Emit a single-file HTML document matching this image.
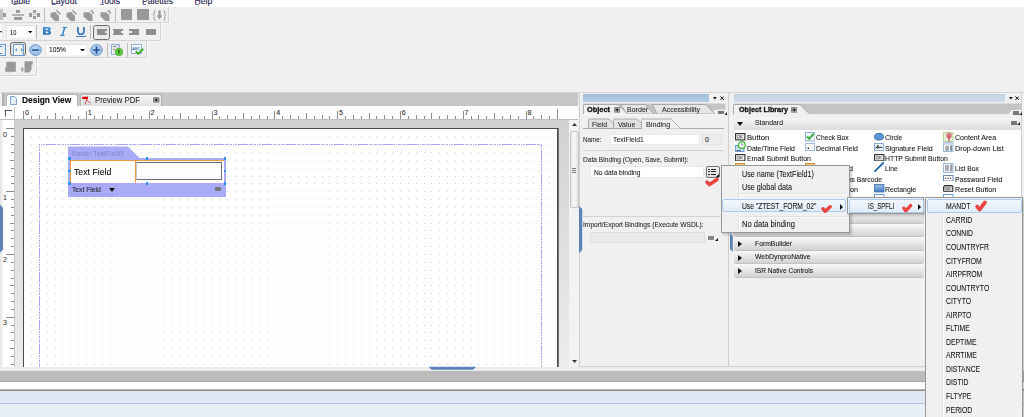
<!DOCTYPE html><html><head><meta charset='utf-8'><style>
*{margin:0;padding:0;box-sizing:border-box}
html,body{width:1024px;height:417px;overflow:hidden;background:#f0f0f0;font-family:"Liberation Sans",sans-serif;color:#222}
body{position:relative}
div,span,svg{position:absolute;display:block}
.t{white-space:nowrap;line-height:1;-webkit-text-stroke:0.06px currentColor}
.ico{background:#8e8e8e}
</style></head><body><div style="left:0.0px;top:0.0px;width:1024.0px;height:7.0px;background:#fff"></div>
<span class="t" style="left:9.5px;top:-3.0px;font-size:8.6px;color:#22224a;font-weight:normal;-webkit-text-stroke:0.1px currentColor">Table</span>
<span class="t" style="left:51.0px;top:-3.0px;font-size:8.6px;color:#22224a;font-weight:normal;-webkit-text-stroke:0.1px currentColor">Layout</span>
<span class="t" style="left:100.0px;top:-3.0px;font-size:8.6px;color:#22224a;font-weight:normal;-webkit-text-stroke:0.1px currentColor">Tools</span>
<span class="t" style="left:142.0px;top:-3.0px;font-size:8.6px;color:#22224a;font-weight:normal;-webkit-text-stroke:0.1px currentColor">Palettes</span>
<span class="t" style="left:194.5px;top:-3.0px;font-size:8.6px;color:#22224a;font-weight:normal;-webkit-text-stroke:0.1px currentColor">Help</span>
<div style="left:13.0px;top:4.3px;width:3.5px;height:0.9px;background:#7878a8"></div>
<div style="left:52.0px;top:4.3px;width:3.5px;height:0.9px;background:#7878a8"></div>
<div style="left:100.0px;top:4.3px;width:3.5px;height:0.9px;background:#7878a8"></div>
<div style="left:142.5px;top:4.3px;width:3.5px;height:0.9px;background:#7878a8"></div>
<div style="left:195.0px;top:4.3px;width:3.5px;height:0.9px;background:#7878a8"></div>
<div style="left:0.0px;top:7.0px;width:169.0px;height:16.0px;background:#f0f0f0;border-right:1px solid #d4d4d4;border-bottom:1px solid #d4d4d4;box-shadow:1px 1px 0 #fafafa"></div>
<div style="left:0.0px;top:23.0px;width:161.0px;height:18.0px;background:#f0f0f0;border-right:1px solid #d4d4d4;border-bottom:1px solid #d4d4d4;box-shadow:1px 1px 0 #fafafa"></div>
<div style="left:0.0px;top:41.0px;width:147.0px;height:17.0px;background:#f0f0f0;border-right:1px solid #d4d4d4;border-bottom:1px solid #d4d4d4;box-shadow:1px 1px 0 #fafafa"></div>
<div style="left:0.0px;top:58.0px;width:37.0px;height:18.0px;background:#f0f0f0;border-right:1px solid #d4d4d4;border-bottom:1px solid #d4d4d4;box-shadow:1px 1px 0 #fafafa"></div>
<div style="left:0.0px;top:9.0px;width:2.6px;height:11.0px;background:#c4c4c4"></div>
<div style="left:2.9px;top:13.0px;width:3.1px;height:3.5px;background:#999"></div>
<div style="left:16.1px;top:10.3px;width:3.6px;height:2.7px;background:#999"></div>
<div style="left:12.2px;top:14.2px;width:11.5px;height:1.6px;background:#b4b4b4"></div>
<div style="left:14.1px;top:16.8px;width:7.8px;height:3.1px;background:#999"></div>
<div style="left:29.0px;top:13.0px;width:3.1px;height:3.5px;background:#999"></div>
<div style="left:37.2px;top:13.0px;width:2.8px;height:3.5px;background:#999"></div>
<div style="left:33.0px;top:10.3px;width:3.2px;height:2.7px;background:#999"></div>
<div style="left:33.0px;top:16.0px;width:3.2px;height:2.7px;background:#999"></div>
<div style="left:32.0px;top:14.3px;width:5.2px;height:1.0px;background:#c8c8c8"></div>
<div style="left:44.0px;top:8.0px;width:1.0px;height:13.7px;background:#bdbdbd"></div>
<svg style="left:49.5px;top:8.5px" width="12" height="13" viewBox="0 0 12 13"><path d="M0.5 4 L5 2.8 L9 7 V12 H4.8 L0.5 7.5Z" fill="#999"/><path d="M6.3 1.3 L10.3 5.3" stroke="#999" stroke-width="1.6"/></svg>
<svg style="left:66px;top:8.5px" width="12" height="13" viewBox="0 0 12 13"><path d="M0.5 4 L5 2.8 L9 7 V12 H4.8 L0.5 7.5Z" fill="#999"/><path d="M6.3 1.3 L10.3 5.3" stroke="#999" stroke-width="1.6"/></svg>
<svg style="left:83px;top:8.5px" width="12" height="13" viewBox="0 0 12 13"><path d="M0.5 3.3 H6.5 L9.5 6.5 V12 H5.5 L0.5 7.5Z" fill="#999"/><path d="M7.5 1.5 Q10.5 2 10 5" stroke="#999" stroke-width="1.4" fill="none"/></svg>
<svg style="left:99.5px;top:8.5px" width="12" height="13" viewBox="0 0 12 13"><path d="M0.5 3.3 H6.5 L9.5 6.5 V12 H5.5 L0.5 7.5Z" fill="#999"/><path d="M7.5 1.5 Q10.5 2 10 5" stroke="#999" stroke-width="1.4" fill="none"/></svg>
<div style="left:115.2px;top:8.0px;width:1.0px;height:13.5px;background:#bdbdbd"></div>
<div style="left:120.5px;top:8.9px;width:11.1px;height:11.1px;background:#999"></div>
<div style="left:137.2px;top:8.9px;width:11.4px;height:11.1px;background:#999"></div>
<svg style="left:153px;top:9.5px" width="13" height="11" viewBox="0 0 13 11"><path d="M2.5 0.5 Q1.2 0.5 1.2 2 V4.3 L0.3 5.3 L1.2 6.3 V9 Q1.2 10.5 2.5 10.5 M10.5 0.5 Q11.8 0.5 11.8 2 V4.3 L12.7 5.3 L11.8 6.3 V9 Q11.8 10.5 10.5 10.5" stroke="#999" stroke-width="1" fill="none"/><path d="M5.3 0.5 H7.7 V5.5 H9.5 L6.5 9.5 L3.5 5.5 H5.3Z" fill="#999"/></svg>
<div style="left:0.0px;top:25.2px;width:3.0px;height:12.9px;background:#fff;border-right:1px solid #e6e6e6"></div>
<svg style="left:0px;top:30.8px" width="2" height="2" viewBox="0 0 2 2"><path d="M0 0H2L1 2Z" fill="#111"/></svg>
<div style="left:5.6px;top:25.2px;width:29.0px;height:12.9px;background:#fff;border:1px solid #e2e2e2;border-right-color:#f4f4f4;border-bottom-color:#f4f4f4"></div>
<span class="t" style="left:9.7px;top:29.0px;font-size:7.6px;color:#111;font-weight:normal;transform:scaleX(0.745);transform-origin:0 0;">10</span>
<svg style="left:28px;top:30.8px" width="4.5" height="2.2" viewBox="0 0 4.5 2.2"><path d="M0 0H4.5L2.25 2.2Z" fill="#000"/></svg>
<div style="left:36.2px;top:25.0px;width:1.0px;height:13.7px;background:#bdbdbd"></div>
<svg style="left:43px;top:27.3px" width="8.2" height="7.8" viewBox="0 0 8.2 7.8"><defs><linearGradient id="gb" x1="0" y1="0" x2="0" y2="1"><stop offset="0" stop-color="#4a96d8"/><stop offset="1" stop-color="#2a6cb0"/></linearGradient></defs><path d="M0 0 H5 Q7.8 0 7.8 2 Q7.8 3.4 6.3 3.8 Q8.2 4.2 8.2 5.7 Q8.2 7.8 5.2 7.8 H0Z M2.6 1.5 V3.1 H4.3 Q5.2 3.1 5.2 2.3 Q5.2 1.5 4.3 1.5Z M2.6 4.6 V6.3 H4.6 Q5.5 6.3 5.5 5.45 Q5.5 4.6 4.6 4.6Z" fill="url(#gb)" fill-rule="evenodd"/></svg>
<svg style="left:60px;top:27px" width="7.2" height="8.6" viewBox="0 0 7.2 8.6"><path d="M2.6 0.2 H7 M0.2 8.4 H4.6 M4.8 0.2 L2.4 8.4" stroke="#3580c4" stroke-width="1.5" fill="none"/></svg>
<svg style="left:76.5px;top:27px" width="8" height="8" viewBox="0 0 8 8"><path d="M0.9 0 V4.5 Q0.9 7.3 3.9 7.3 Q6.9 7.3 6.9 4.5 V0" stroke="#2f74bc" stroke-width="1.7" fill="none"/></svg>
<div style="left:75.5px;top:35.9px;width:10.0px;height:1.1px;background:#3d7cc0"></div>
<div style="left:90.4px;top:25.0px;width:1.0px;height:14.0px;background:#bdbdbd"></div>
<div style="left:93.0px;top:25.0px;width:16.7px;height:14.6px;background:linear-gradient(#e4e4e4,#ececec);border:1px solid #6e6e6e;border-radius:2.5px"></div>
<div style="left:97.0px;top:28.9px;width:10.0px;height:1.8px;background:#8e8e8e"></div>
<div style="left:97.0px;top:30.9px;width:7.5px;height:1.8px;background:#8e8e8e"></div>
<div style="left:97.0px;top:32.9px;width:10.0px;height:1.8px;background:#8e8e8e"></div>
<div style="left:112.7px;top:28.9px;width:10.0px;height:1.8px;background:#8e8e8e"></div>
<div style="left:114.2px;top:30.9px;width:7.0px;height:1.8px;background:#8e8e8e"></div>
<div style="left:112.7px;top:32.9px;width:10.0px;height:1.8px;background:#8e8e8e"></div>
<div style="left:129.1px;top:28.9px;width:10.0px;height:1.8px;background:#8e8e8e"></div>
<div style="left:131.6px;top:30.9px;width:7.5px;height:1.8px;background:#8e8e8e"></div>
<div style="left:129.1px;top:32.9px;width:10.0px;height:1.8px;background:#8e8e8e"></div>
<div style="left:145.5px;top:28.9px;width:10.5px;height:1.8px;background:#8e8e8e"></div>
<div style="left:145.5px;top:30.9px;width:10.5px;height:1.8px;background:#8e8e8e"></div>
<div style="left:145.5px;top:32.9px;width:10.5px;height:1.8px;background:#8e8e8e"></div>
<div style="left:0.0px;top:44.0px;width:6.0px;height:11.6px;background:linear-gradient(90deg,#f4f6f8,#e4e8ec);border:1px solid #6a9bd0;border-left:none"></div>
<div style="left:0.0px;top:46.0px;width:2.0px;height:1.2px;background:#3b7cc0"></div>
<div style="left:0.0px;top:52.6px;width:2.0px;height:1.2px;background:#3b7cc0"></div>
<div style="left:10.3px;top:42.2px;width:16.1px;height:14.3px;background:#e2e2e2;border:1px solid #666;border-radius:2.5px"></div>
<div style="left:13.0px;top:44.0px;width:11.0px;height:11.8px;background:linear-gradient(90deg,#fdfdfd,#e8e8e8);border:1px solid #6a9bd0"></div>
<svg style="left:14.5px;top:48px" width="8" height="3.5" viewBox="0 0 8 3.5"><path d="M0 1.75 L1.8 0 V3.5Z M8 1.75 L6.2 0 V3.5Z" fill="#3b7cc0"/></svg>
<svg style="left:28.5px;top:43.5px" width="13" height="12" viewBox="0 0 13 12"><defs><radialGradient id="gz28.5" cx="0.5" cy="0.4" r="0.6"><stop offset="0" stop-color="#c4dcf4"/><stop offset="1" stop-color="#8ab4e0"/></radialGradient></defs><ellipse cx="6.5" cy="6" rx="5.8" ry="5.5" fill="url(#gz28.5)" stroke="#6c9ad0" stroke-width="0.9"/><rect x="3.2" y="5.3" width="6.6" height="1.5" fill="#1d4f90"/></svg>
<div style="left:44.6px;top:43.5px;width:42.4px;height:12.0px;background:#fff;border:1px solid #e2e2e2;border-right-color:#f4f4f4;border-bottom-color:#f4f4f4"></div>
<span class="t" style="left:49.0px;top:46.0px;font-size:8px;color:#111;font-weight:normal;transform:scaleX(0.831);transform-origin:0 0;">105%</span>
<svg style="left:80px;top:48.5px" width="5" height="2.5" viewBox="0 0 5 2.5"><path d="M0 0H5L2.5 2.5Z" fill="#000"/></svg>
<svg style="left:89.8px;top:43.5px" width="13" height="12" viewBox="0 0 13 12"><defs><radialGradient id="gz89.8" cx="0.5" cy="0.4" r="0.6"><stop offset="0" stop-color="#c4dcf4"/><stop offset="1" stop-color="#8ab4e0"/></radialGradient></defs><ellipse cx="6.5" cy="6" rx="5.8" ry="5.5" fill="url(#gz89.8)" stroke="#6c9ad0" stroke-width="0.9"/><rect x="3.2" y="5.3" width="6.6" height="1.5" fill="#1d4f90"/><rect x="5.7" y="2.6" width="1.6" height="7" fill="#1d4f90"/></svg>
<div style="left:106.5px;top:43.0px;width:1.0px;height:14.0px;background:#bdbdbd"></div>
<div style="left:111.0px;top:44.0px;width:9.0px;height:11.0px;background:linear-gradient(90deg,#f0f0f0,#d8d8d8);border:1px solid #8fb0d8"></div>
<div style="left:112.5px;top:46.0px;width:3.5px;height:1.0px;background:#888"></div>
<div style="left:112.5px;top:48.5px;width:2.5px;height:1.0px;background:#888"></div>
<svg style="left:114.5px;top:47.5px" width="8" height="8" viewBox="0 0 8 8"><circle cx="4" cy="4" r="3.7" fill="#5cc83a" stroke="#3a9a22" stroke-width="0.6"/><rect x="3.4" y="2" width="1.2" height="3.5" fill="#1a5a10"/></svg>
<div style="left:126.5px;top:43.0px;width:1.0px;height:14.0px;background:#bdbdbd"></div>
<div style="left:131.0px;top:44.0px;width:11.0px;height:10.0px;background:#f4f7fb;border:1px solid #8fb0d8"></div>
<span class="t" style="left:132.0px;top:47.0px;font-size:4.2px;color:#3a6ab0;font-weight:normal;">ABC</span>
<svg style="left:134.5px;top:48px" width="9" height="7" viewBox="0 0 9 7"><path d="M0.8 3.2 L3.3 5.8 L8.2 0.8" stroke="#3cb02c" stroke-width="2" fill="none"/></svg>
<svg style="left:5px;top:61px" width="12" height="12" viewBox="0 0 12 12"><path d="M1.3 0.8 H10.8 V10.8 H3.8 V11.5 H2.6 V10.8 H0.2 V6.3 H1.3Z" fill="#999"/></svg>
<svg style="left:21px;top:61px" width="13" height="12" viewBox="0 0 13 12"><path d="M3.5 0.3 H11.8 V3.5 L10.5 3.8 V8.6 L8 11.5 H3.5Z M0.3 6.5 H2.3 V10.5 H0.3Z" fill="#999"/></svg>
<div style="left:0.0px;top:91.5px;width:1024.0px;height:1.0px;background:#d6d6d6"></div>
<div style="left:2.0px;top:92.5px;width:576.0px;height:13.5px;background:#c6c6c6"></div>
<div style="left:2.0px;top:92.5px;width:2.0px;height:13.5px;background:#b0b0b0"></div>
<div style="left:5.5px;top:94.0px;width:72.0px;height:13.0px;background:#fff;border:1px solid #b4b4b4;border-bottom:none;border-radius:3px 3px 0 0"></div>
<svg style="left:10px;top:96px" width="7" height="9" viewBox="0 0 7 9"><path d="M0.5 0.5H4.5L6.5 2.5V8.5H0.5Z" fill="#e4eef8" stroke="#7ea6d4"/></svg>
<span class="t" style="left:21.5px;top:96.0px;font-size:8.4px;color:#000;font-weight:bold;transform:scaleX(1.003);transform-origin:0 0;">Design View</span>
<div style="left:80.0px;top:94.0px;width:81.5px;height:12.0px;background:linear-gradient(#f6f6f6,#e2e2e2);border:1px solid #b4b4b4;border-bottom:none;border-radius:3px 3px 0 0"></div>
<svg style="left:82px;top:96px" width="9" height="9" viewBox="0 0 9 9"><path d="M2 0.3H6.5L8.7 2.5V8.7H2Z" fill="#ececec" stroke="#b8b8b8" stroke-width="0.6"/><rect x="0.3" y="0.8" width="5.7" height="2.2" fill="#e80000"/><path d="M3.2 8.2Q4.2 5.5 4.6 3.2Q5.5 6 8.3 6.8" stroke="#e83a3a" stroke-width="0.9" fill="none"/></svg>
<span class="t" style="left:95.0px;top:97.0px;font-size:8.2px;color:#222;font-weight:normal;transform:scaleX(0.941);transform-origin:0 0;">Preview PDF</span>
<svg style="left:153.3px;top:97.2px" width="6.5" height="5.8" viewBox="0 0 6.5 5.8"><rect x="0" y="0" width="6.5" height="5.8" rx="1" fill="#8a8a8a"/><path d="M1.6 1.3L4.9 4.5M4.9 1.3L1.6 4.5" stroke="#d8d8d8" stroke-width="0.8"/><circle cx="3.25" cy="2.9" r="1.1" fill="#111"/></svg>
<div style="left:0.0px;top:106.0px;width:578.0px;height:14.0px;background:#fff"></div>
<div style="left:0.0px;top:119.0px;width:578.0px;height:1.0px;background:#bebebe"></div>
<div style="left:13.5px;top:107.0px;width:1.0px;height:13.0px;background:#c8c8c8"></div>
<svg style="left:4px;top:109px" width="9" height="8" viewBox="0 0 9 8"><path d="M0.5 1.5H8M1.5 1.5V7.5" stroke="#444" stroke-width="0.9" fill="none"/></svg>
<svg style="left:0;top:0" width="578" height="120" viewBox="0 0 578 120"><path d="M23.5 110.5V119 M31.5 116.0V119 M39.5 114.5V119 M47.5 116.0V119 M55.5 112.5V119 M62.5 116.0V119 M70.5 114.5V119 M78.5 116.0V119 M86.5 110.5V119 M94.5 116.0V119 M102.5 114.5V119 M110.5 116.0V119 M117.5 112.5V119 M125.5 116.0V119 M133.5 114.5V119 M141.5 116.0V119 M149.5 110.5V119 M157.5 116.0V119 M164.5 114.5V119 M172.5 116.0V119 M180.5 112.5V119 M188.5 116.0V119 M196.5 114.5V119 M204.5 116.0V119 M212.5 110.5V119 M219.5 116.0V119 M227.5 114.5V119 M235.5 116.0V119 M243.5 112.5V119 M251.5 116.0V119 M259.5 114.5V119 M267.5 116.0V119 M274.5 110.5V119 M282.5 116.0V119 M290.5 114.5V119 M298.5 116.0V119 M306.5 112.5V119 M314.5 116.0V119 M322.5 114.5V119 M329.5 116.0V119 M337.5 110.5V119 M345.5 116.0V119 M353.5 114.5V119 M361.5 116.0V119 M369.5 112.5V119 M376.5 116.0V119 M384.5 114.5V119 M392.5 116.0V119 M400.5 110.5V119 M408.5 116.0V119 M416.5 114.5V119 M424.5 116.0V119 M431.5 112.5V119 M439.5 116.0V119 M447.5 114.5V119 M455.5 116.0V119 M463.5 110.5V119 M471.5 116.0V119 M478.5 114.5V119 M486.5 116.0V119 M494.5 112.5V119 M502.5 116.0V119 M510.5 114.5V119 M518.5 116.0V119 M526.5 110.5V119 M533.5 116.0V119 M541.5 114.5V119 M549.5 116.0V119 M557.5 109.0V119" stroke="#8c8c8c" stroke-width="1" shape-rendering="crispEdges"/></svg>
<span class="t" style="left:25.0px;top:109.0px;font-size:7.2px;color:#222;font-weight:normal;">0</span>
<span class="t" style="left:87.8px;top:109.0px;font-size:7.2px;color:#222;font-weight:normal;">1</span>
<span class="t" style="left:150.6px;top:109.0px;font-size:7.2px;color:#222;font-weight:normal;">2</span>
<span class="t" style="left:213.4px;top:109.0px;font-size:7.2px;color:#222;font-weight:normal;">3</span>
<span class="t" style="left:276.2px;top:109.0px;font-size:7.2px;color:#222;font-weight:normal;">4</span>
<span class="t" style="left:339.0px;top:109.0px;font-size:7.2px;color:#222;font-weight:normal;">5</span>
<span class="t" style="left:401.8px;top:109.0px;font-size:7.2px;color:#222;font-weight:normal;">6</span>
<span class="t" style="left:464.6px;top:109.0px;font-size:7.2px;color:#222;font-weight:normal;">7</span>
<span class="t" style="left:527.4px;top:109.0px;font-size:7.2px;color:#222;font-weight:normal;">8</span>
<div style="left:14.0px;top:120.0px;width:555.0px;height:246.5px;background:linear-gradient(#d0d0d0,#d4d4d4 10%,#ececec)"></div>
<div style="left:14.0px;top:120.0px;width:1.0px;height:246.5px;background:#c4c4c4"></div>
<div style="left:0.0px;top:120.0px;width:13.5px;height:246.5px;background:#fff"></div>
<div style="left:0.0px;top:120.0px;width:2.5px;height:246.5px;background:linear-gradient(90deg,#e4e4e4,#f4f4f4)"></div>
<svg style="left:0;top:0" width="15" height="367" viewBox="0 0 15 367"><path d="M6.0 128.5H14 M11.0 136.5H14 M10.5 144.5H14 M11.0 152.5H14 M10.0 160.5H14 M11.0 168.5H14 M10.5 176.5H14 M11.0 183.5H14 M6.0 191.5H14 M11.0 199.5H14 M10.5 207.5H14 M11.0 215.5H14 M10.0 223.5H14 M11.0 230.5H14 M10.5 238.5H14 M11.0 246.5H14 M6.0 254.5H14 M11.0 262.5H14 M10.5 270.5H14 M11.0 278.5H14 M10.0 285.5H14 M11.0 293.5H14 M10.5 301.5H14 M11.0 309.5H14 M6.0 317.5H14 M11.0 325.5H14 M10.5 332.5H14 M11.0 340.5H14 M10.0 348.5H14 M11.0 356.5H14 M10.5 364.5H14" stroke="#8c8c8c" stroke-width="1" shape-rendering="crispEdges"/></svg>
<span class="t" style="left:3.0px;top:131.0px;font-size:7px;color:#333;font-weight:normal;">0</span>
<span class="t" style="left:3.0px;top:194.0px;font-size:7px;color:#333;font-weight:normal;">1</span>
<span class="t" style="left:3.0px;top:256.0px;font-size:7px;color:#333;font-weight:normal;">2</span>
<span class="t" style="left:3.0px;top:319.0px;font-size:7px;color:#333;font-weight:normal;">3</span>
<div style="left:23.0px;top:128.0px;width:535.0px;height:239.0px;background:#fff;border-left:1px solid #4a4a4a;border-top:1px solid #4a4a4a"></div>
<div style="left:557.0px;top:128.0px;width:2.0px;height:239.0px;background:linear-gradient(90deg,#333,#888)"></div>
<svg style="left:0;top:0" width="1024" height="417" viewBox="0 0 1024 417"><path d="M31 136h1v1h-1zM31 144h1v1h-1zM31 152h1v1h-1zM31 160h1v1h-1zM31 168h1v1h-1zM31 176h1v1h-1zM31 183h1v1h-1zM31 191h1v1h-1zM31 199h1v1h-1zM31 207h1v1h-1zM31 215h1v1h-1zM31 223h1v1h-1zM31 230h1v1h-1zM31 238h1v1h-1zM31 246h1v1h-1zM31 254h1v1h-1zM31 262h1v1h-1zM31 270h1v1h-1zM31 278h1v1h-1zM31 285h1v1h-1zM31 293h1v1h-1zM31 301h1v1h-1zM31 309h1v1h-1zM31 317h1v1h-1zM31 325h1v1h-1zM31 332h1v1h-1zM31 340h1v1h-1zM31 348h1v1h-1zM31 356h1v1h-1zM31 364h1v1h-1zM39 136h1v1h-1zM39 144h1v1h-1zM39 152h1v1h-1zM39 160h1v1h-1zM39 168h1v1h-1zM39 176h1v1h-1zM39 183h1v1h-1zM39 191h1v1h-1zM39 199h1v1h-1zM39 207h1v1h-1zM39 215h1v1h-1zM39 223h1v1h-1zM39 230h1v1h-1zM39 238h1v1h-1zM39 246h1v1h-1zM39 254h1v1h-1zM39 262h1v1h-1zM39 270h1v1h-1zM39 278h1v1h-1zM39 285h1v1h-1zM39 293h1v1h-1zM39 301h1v1h-1zM39 309h1v1h-1zM39 317h1v1h-1zM39 325h1v1h-1zM39 332h1v1h-1zM39 340h1v1h-1zM39 348h1v1h-1zM39 356h1v1h-1zM39 364h1v1h-1zM47 136h1v1h-1zM47 144h1v1h-1zM47 152h1v1h-1zM47 160h1v1h-1zM47 168h1v1h-1zM47 176h1v1h-1zM47 183h1v1h-1zM47 191h1v1h-1zM47 199h1v1h-1zM47 207h1v1h-1zM47 215h1v1h-1zM47 223h1v1h-1zM47 230h1v1h-1zM47 238h1v1h-1zM47 246h1v1h-1zM47 254h1v1h-1zM47 262h1v1h-1zM47 270h1v1h-1zM47 278h1v1h-1zM47 285h1v1h-1zM47 293h1v1h-1zM47 301h1v1h-1zM47 309h1v1h-1zM47 317h1v1h-1zM47 325h1v1h-1zM47 332h1v1h-1zM47 340h1v1h-1zM47 348h1v1h-1zM47 356h1v1h-1zM47 364h1v1h-1zM55 136h1v1h-1zM55 144h1v1h-1zM55 152h1v1h-1zM55 160h1v1h-1zM55 168h1v1h-1zM55 176h1v1h-1zM55 183h1v1h-1zM55 191h1v1h-1zM55 199h1v1h-1zM55 207h1v1h-1zM55 215h1v1h-1zM55 223h1v1h-1zM55 230h1v1h-1zM55 238h1v1h-1zM55 246h1v1h-1zM55 254h1v1h-1zM55 262h1v1h-1zM55 270h1v1h-1zM55 278h1v1h-1zM55 285h1v1h-1zM55 293h1v1h-1zM55 301h1v1h-1zM55 309h1v1h-1zM55 317h1v1h-1zM55 325h1v1h-1zM55 332h1v1h-1zM55 340h1v1h-1zM55 348h1v1h-1zM55 356h1v1h-1zM55 364h1v1h-1zM62 136h1v1h-1zM62 144h1v1h-1zM62 152h1v1h-1zM62 160h1v1h-1zM62 168h1v1h-1zM62 176h1v1h-1zM62 183h1v1h-1zM62 191h1v1h-1zM62 199h1v1h-1zM62 207h1v1h-1zM62 215h1v1h-1zM62 223h1v1h-1zM62 230h1v1h-1zM62 238h1v1h-1zM62 246h1v1h-1zM62 254h1v1h-1zM62 262h1v1h-1zM62 270h1v1h-1zM62 278h1v1h-1zM62 285h1v1h-1zM62 293h1v1h-1zM62 301h1v1h-1zM62 309h1v1h-1zM62 317h1v1h-1zM62 325h1v1h-1zM62 332h1v1h-1zM62 340h1v1h-1zM62 348h1v1h-1zM62 356h1v1h-1zM62 364h1v1h-1zM70 136h1v1h-1zM70 144h1v1h-1zM70 152h1v1h-1zM70 160h1v1h-1zM70 168h1v1h-1zM70 176h1v1h-1zM70 183h1v1h-1zM70 191h1v1h-1zM70 199h1v1h-1zM70 207h1v1h-1zM70 215h1v1h-1zM70 223h1v1h-1zM70 230h1v1h-1zM70 238h1v1h-1zM70 246h1v1h-1zM70 254h1v1h-1zM70 262h1v1h-1zM70 270h1v1h-1zM70 278h1v1h-1zM70 285h1v1h-1zM70 293h1v1h-1zM70 301h1v1h-1zM70 309h1v1h-1zM70 317h1v1h-1zM70 325h1v1h-1zM70 332h1v1h-1zM70 340h1v1h-1zM70 348h1v1h-1zM70 356h1v1h-1zM70 364h1v1h-1zM78 136h1v1h-1zM78 144h1v1h-1zM78 152h1v1h-1zM78 160h1v1h-1zM78 168h1v1h-1zM78 176h1v1h-1zM78 183h1v1h-1zM78 191h1v1h-1zM78 199h1v1h-1zM78 207h1v1h-1zM78 215h1v1h-1zM78 223h1v1h-1zM78 230h1v1h-1zM78 238h1v1h-1zM78 246h1v1h-1zM78 254h1v1h-1zM78 262h1v1h-1zM78 270h1v1h-1zM78 278h1v1h-1zM78 285h1v1h-1zM78 293h1v1h-1zM78 301h1v1h-1zM78 309h1v1h-1zM78 317h1v1h-1zM78 325h1v1h-1zM78 332h1v1h-1zM78 340h1v1h-1zM78 348h1v1h-1zM78 356h1v1h-1zM78 364h1v1h-1zM86 136h1v1h-1zM86 144h1v1h-1zM86 152h1v1h-1zM86 160h1v1h-1zM86 168h1v1h-1zM86 176h1v1h-1zM86 183h1v1h-1zM86 191h1v1h-1zM86 199h1v1h-1zM86 207h1v1h-1zM86 215h1v1h-1zM86 223h1v1h-1zM86 230h1v1h-1zM86 238h1v1h-1zM86 246h1v1h-1zM86 254h1v1h-1zM86 262h1v1h-1zM86 270h1v1h-1zM86 278h1v1h-1zM86 285h1v1h-1zM86 293h1v1h-1zM86 301h1v1h-1zM86 309h1v1h-1zM86 317h1v1h-1zM86 325h1v1h-1zM86 332h1v1h-1zM86 340h1v1h-1zM86 348h1v1h-1zM86 356h1v1h-1zM86 364h1v1h-1zM94 136h1v1h-1zM94 144h1v1h-1zM94 152h1v1h-1zM94 160h1v1h-1zM94 168h1v1h-1zM94 176h1v1h-1zM94 183h1v1h-1zM94 191h1v1h-1zM94 199h1v1h-1zM94 207h1v1h-1zM94 215h1v1h-1zM94 223h1v1h-1zM94 230h1v1h-1zM94 238h1v1h-1zM94 246h1v1h-1zM94 254h1v1h-1zM94 262h1v1h-1zM94 270h1v1h-1zM94 278h1v1h-1zM94 285h1v1h-1zM94 293h1v1h-1zM94 301h1v1h-1zM94 309h1v1h-1zM94 317h1v1h-1zM94 325h1v1h-1zM94 332h1v1h-1zM94 340h1v1h-1zM94 348h1v1h-1zM94 356h1v1h-1zM94 364h1v1h-1zM102 136h1v1h-1zM102 144h1v1h-1zM102 152h1v1h-1zM102 160h1v1h-1zM102 168h1v1h-1zM102 176h1v1h-1zM102 183h1v1h-1zM102 191h1v1h-1zM102 199h1v1h-1zM102 207h1v1h-1zM102 215h1v1h-1zM102 223h1v1h-1zM102 230h1v1h-1zM102 238h1v1h-1zM102 246h1v1h-1zM102 254h1v1h-1zM102 262h1v1h-1zM102 270h1v1h-1zM102 278h1v1h-1zM102 285h1v1h-1zM102 293h1v1h-1zM102 301h1v1h-1zM102 309h1v1h-1zM102 317h1v1h-1zM102 325h1v1h-1zM102 332h1v1h-1zM102 340h1v1h-1zM102 348h1v1h-1zM102 356h1v1h-1zM102 364h1v1h-1zM110 136h1v1h-1zM110 144h1v1h-1zM110 152h1v1h-1zM110 160h1v1h-1zM110 168h1v1h-1zM110 176h1v1h-1zM110 183h1v1h-1zM110 191h1v1h-1zM110 199h1v1h-1zM110 207h1v1h-1zM110 215h1v1h-1zM110 223h1v1h-1zM110 230h1v1h-1zM110 238h1v1h-1zM110 246h1v1h-1zM110 254h1v1h-1zM110 262h1v1h-1zM110 270h1v1h-1zM110 278h1v1h-1zM110 285h1v1h-1zM110 293h1v1h-1zM110 301h1v1h-1zM110 309h1v1h-1zM110 317h1v1h-1zM110 325h1v1h-1zM110 332h1v1h-1zM110 340h1v1h-1zM110 348h1v1h-1zM110 356h1v1h-1zM110 364h1v1h-1zM117 136h1v1h-1zM117 144h1v1h-1zM117 152h1v1h-1zM117 160h1v1h-1zM117 168h1v1h-1zM117 176h1v1h-1zM117 183h1v1h-1zM117 191h1v1h-1zM117 199h1v1h-1zM117 207h1v1h-1zM117 215h1v1h-1zM117 223h1v1h-1zM117 230h1v1h-1zM117 238h1v1h-1zM117 246h1v1h-1zM117 254h1v1h-1zM117 262h1v1h-1zM117 270h1v1h-1zM117 278h1v1h-1zM117 285h1v1h-1zM117 293h1v1h-1zM117 301h1v1h-1zM117 309h1v1h-1zM117 317h1v1h-1zM117 325h1v1h-1zM117 332h1v1h-1zM117 340h1v1h-1zM117 348h1v1h-1zM117 356h1v1h-1zM117 364h1v1h-1zM125 136h1v1h-1zM125 144h1v1h-1zM125 152h1v1h-1zM125 160h1v1h-1zM125 168h1v1h-1zM125 176h1v1h-1zM125 183h1v1h-1zM125 191h1v1h-1zM125 199h1v1h-1zM125 207h1v1h-1zM125 215h1v1h-1zM125 223h1v1h-1zM125 230h1v1h-1zM125 238h1v1h-1zM125 246h1v1h-1zM125 254h1v1h-1zM125 262h1v1h-1zM125 270h1v1h-1zM125 278h1v1h-1zM125 285h1v1h-1zM125 293h1v1h-1zM125 301h1v1h-1zM125 309h1v1h-1zM125 317h1v1h-1zM125 325h1v1h-1zM125 332h1v1h-1zM125 340h1v1h-1zM125 348h1v1h-1zM125 356h1v1h-1zM125 364h1v1h-1zM133 136h1v1h-1zM133 144h1v1h-1zM133 152h1v1h-1zM133 160h1v1h-1zM133 168h1v1h-1zM133 176h1v1h-1zM133 183h1v1h-1zM133 191h1v1h-1zM133 199h1v1h-1zM133 207h1v1h-1zM133 215h1v1h-1zM133 223h1v1h-1zM133 230h1v1h-1zM133 238h1v1h-1zM133 246h1v1h-1zM133 254h1v1h-1zM133 262h1v1h-1zM133 270h1v1h-1zM133 278h1v1h-1zM133 285h1v1h-1zM133 293h1v1h-1zM133 301h1v1h-1zM133 309h1v1h-1zM133 317h1v1h-1zM133 325h1v1h-1zM133 332h1v1h-1zM133 340h1v1h-1zM133 348h1v1h-1zM133 356h1v1h-1zM133 364h1v1h-1zM141 136h1v1h-1zM141 144h1v1h-1zM141 152h1v1h-1zM141 160h1v1h-1zM141 168h1v1h-1zM141 176h1v1h-1zM141 183h1v1h-1zM141 191h1v1h-1zM141 199h1v1h-1zM141 207h1v1h-1zM141 215h1v1h-1zM141 223h1v1h-1zM141 230h1v1h-1zM141 238h1v1h-1zM141 246h1v1h-1zM141 254h1v1h-1zM141 262h1v1h-1zM141 270h1v1h-1zM141 278h1v1h-1zM141 285h1v1h-1zM141 293h1v1h-1zM141 301h1v1h-1zM141 309h1v1h-1zM141 317h1v1h-1zM141 325h1v1h-1zM141 332h1v1h-1zM141 340h1v1h-1zM141 348h1v1h-1zM141 356h1v1h-1zM141 364h1v1h-1zM149 136h1v1h-1zM149 144h1v1h-1zM149 152h1v1h-1zM149 160h1v1h-1zM149 168h1v1h-1zM149 176h1v1h-1zM149 183h1v1h-1zM149 191h1v1h-1zM149 199h1v1h-1zM149 207h1v1h-1zM149 215h1v1h-1zM149 223h1v1h-1zM149 230h1v1h-1zM149 238h1v1h-1zM149 246h1v1h-1zM149 254h1v1h-1zM149 262h1v1h-1zM149 270h1v1h-1zM149 278h1v1h-1zM149 285h1v1h-1zM149 293h1v1h-1zM149 301h1v1h-1zM149 309h1v1h-1zM149 317h1v1h-1zM149 325h1v1h-1zM149 332h1v1h-1zM149 340h1v1h-1zM149 348h1v1h-1zM149 356h1v1h-1zM149 364h1v1h-1zM157 136h1v1h-1zM157 144h1v1h-1zM157 152h1v1h-1zM157 160h1v1h-1zM157 168h1v1h-1zM157 176h1v1h-1zM157 183h1v1h-1zM157 191h1v1h-1zM157 199h1v1h-1zM157 207h1v1h-1zM157 215h1v1h-1zM157 223h1v1h-1zM157 230h1v1h-1zM157 238h1v1h-1zM157 246h1v1h-1zM157 254h1v1h-1zM157 262h1v1h-1zM157 270h1v1h-1zM157 278h1v1h-1zM157 285h1v1h-1zM157 293h1v1h-1zM157 301h1v1h-1zM157 309h1v1h-1zM157 317h1v1h-1zM157 325h1v1h-1zM157 332h1v1h-1zM157 340h1v1h-1zM157 348h1v1h-1zM157 356h1v1h-1zM157 364h1v1h-1zM164 136h1v1h-1zM164 144h1v1h-1zM164 152h1v1h-1zM164 160h1v1h-1zM164 168h1v1h-1zM164 176h1v1h-1zM164 183h1v1h-1zM164 191h1v1h-1zM164 199h1v1h-1zM164 207h1v1h-1zM164 215h1v1h-1zM164 223h1v1h-1zM164 230h1v1h-1zM164 238h1v1h-1zM164 246h1v1h-1zM164 254h1v1h-1zM164 262h1v1h-1zM164 270h1v1h-1zM164 278h1v1h-1zM164 285h1v1h-1zM164 293h1v1h-1zM164 301h1v1h-1zM164 309h1v1h-1zM164 317h1v1h-1zM164 325h1v1h-1zM164 332h1v1h-1zM164 340h1v1h-1zM164 348h1v1h-1zM164 356h1v1h-1zM164 364h1v1h-1zM172 136h1v1h-1zM172 144h1v1h-1zM172 152h1v1h-1zM172 160h1v1h-1zM172 168h1v1h-1zM172 176h1v1h-1zM172 183h1v1h-1zM172 191h1v1h-1zM172 199h1v1h-1zM172 207h1v1h-1zM172 215h1v1h-1zM172 223h1v1h-1zM172 230h1v1h-1zM172 238h1v1h-1zM172 246h1v1h-1zM172 254h1v1h-1zM172 262h1v1h-1zM172 270h1v1h-1zM172 278h1v1h-1zM172 285h1v1h-1zM172 293h1v1h-1zM172 301h1v1h-1zM172 309h1v1h-1zM172 317h1v1h-1zM172 325h1v1h-1zM172 332h1v1h-1zM172 340h1v1h-1zM172 348h1v1h-1zM172 356h1v1h-1zM172 364h1v1h-1zM180 136h1v1h-1zM180 144h1v1h-1zM180 152h1v1h-1zM180 160h1v1h-1zM180 168h1v1h-1zM180 176h1v1h-1zM180 183h1v1h-1zM180 191h1v1h-1zM180 199h1v1h-1zM180 207h1v1h-1zM180 215h1v1h-1zM180 223h1v1h-1zM180 230h1v1h-1zM180 238h1v1h-1zM180 246h1v1h-1zM180 254h1v1h-1zM180 262h1v1h-1zM180 270h1v1h-1zM180 278h1v1h-1zM180 285h1v1h-1zM180 293h1v1h-1zM180 301h1v1h-1zM180 309h1v1h-1zM180 317h1v1h-1zM180 325h1v1h-1zM180 332h1v1h-1zM180 340h1v1h-1zM180 348h1v1h-1zM180 356h1v1h-1zM180 364h1v1h-1zM188 136h1v1h-1zM188 144h1v1h-1zM188 152h1v1h-1zM188 160h1v1h-1zM188 168h1v1h-1zM188 176h1v1h-1zM188 183h1v1h-1zM188 191h1v1h-1zM188 199h1v1h-1zM188 207h1v1h-1zM188 215h1v1h-1zM188 223h1v1h-1zM188 230h1v1h-1zM188 238h1v1h-1zM188 246h1v1h-1zM188 254h1v1h-1zM188 262h1v1h-1zM188 270h1v1h-1zM188 278h1v1h-1zM188 285h1v1h-1zM188 293h1v1h-1zM188 301h1v1h-1zM188 309h1v1h-1zM188 317h1v1h-1zM188 325h1v1h-1zM188 332h1v1h-1zM188 340h1v1h-1zM188 348h1v1h-1zM188 356h1v1h-1zM188 364h1v1h-1zM196 136h1v1h-1zM196 144h1v1h-1zM196 152h1v1h-1zM196 160h1v1h-1zM196 168h1v1h-1zM196 176h1v1h-1zM196 183h1v1h-1zM196 191h1v1h-1zM196 199h1v1h-1zM196 207h1v1h-1zM196 215h1v1h-1zM196 223h1v1h-1zM196 230h1v1h-1zM196 238h1v1h-1zM196 246h1v1h-1zM196 254h1v1h-1zM196 262h1v1h-1zM196 270h1v1h-1zM196 278h1v1h-1zM196 285h1v1h-1zM196 293h1v1h-1zM196 301h1v1h-1zM196 309h1v1h-1zM196 317h1v1h-1zM196 325h1v1h-1zM196 332h1v1h-1zM196 340h1v1h-1zM196 348h1v1h-1zM196 356h1v1h-1zM196 364h1v1h-1zM204 136h1v1h-1zM204 144h1v1h-1zM204 152h1v1h-1zM204 160h1v1h-1zM204 168h1v1h-1zM204 176h1v1h-1zM204 183h1v1h-1zM204 191h1v1h-1zM204 199h1v1h-1zM204 207h1v1h-1zM204 215h1v1h-1zM204 223h1v1h-1zM204 230h1v1h-1zM204 238h1v1h-1zM204 246h1v1h-1zM204 254h1v1h-1zM204 262h1v1h-1zM204 270h1v1h-1zM204 278h1v1h-1zM204 285h1v1h-1zM204 293h1v1h-1zM204 301h1v1h-1zM204 309h1v1h-1zM204 317h1v1h-1zM204 325h1v1h-1zM204 332h1v1h-1zM204 340h1v1h-1zM204 348h1v1h-1zM204 356h1v1h-1zM204 364h1v1h-1zM212 136h1v1h-1zM212 144h1v1h-1zM212 152h1v1h-1zM212 160h1v1h-1zM212 168h1v1h-1zM212 176h1v1h-1zM212 183h1v1h-1zM212 191h1v1h-1zM212 199h1v1h-1zM212 207h1v1h-1zM212 215h1v1h-1zM212 223h1v1h-1zM212 230h1v1h-1zM212 238h1v1h-1zM212 246h1v1h-1zM212 254h1v1h-1zM212 262h1v1h-1zM212 270h1v1h-1zM212 278h1v1h-1zM212 285h1v1h-1zM212 293h1v1h-1zM212 301h1v1h-1zM212 309h1v1h-1zM212 317h1v1h-1zM212 325h1v1h-1zM212 332h1v1h-1zM212 340h1v1h-1zM212 348h1v1h-1zM212 356h1v1h-1zM212 364h1v1h-1zM219 136h1v1h-1zM219 144h1v1h-1zM219 152h1v1h-1zM219 160h1v1h-1zM219 168h1v1h-1zM219 176h1v1h-1zM219 183h1v1h-1zM219 191h1v1h-1zM219 199h1v1h-1zM219 207h1v1h-1zM219 215h1v1h-1zM219 223h1v1h-1zM219 230h1v1h-1zM219 238h1v1h-1zM219 246h1v1h-1zM219 254h1v1h-1zM219 262h1v1h-1zM219 270h1v1h-1zM219 278h1v1h-1zM219 285h1v1h-1zM219 293h1v1h-1zM219 301h1v1h-1zM219 309h1v1h-1zM219 317h1v1h-1zM219 325h1v1h-1zM219 332h1v1h-1zM219 340h1v1h-1zM219 348h1v1h-1zM219 356h1v1h-1zM219 364h1v1h-1zM227 136h1v1h-1zM227 144h1v1h-1zM227 152h1v1h-1zM227 160h1v1h-1zM227 168h1v1h-1zM227 176h1v1h-1zM227 183h1v1h-1zM227 191h1v1h-1zM227 199h1v1h-1zM227 207h1v1h-1zM227 215h1v1h-1zM227 223h1v1h-1zM227 230h1v1h-1zM227 238h1v1h-1zM227 246h1v1h-1zM227 254h1v1h-1zM227 262h1v1h-1zM227 270h1v1h-1zM227 278h1v1h-1zM227 285h1v1h-1zM227 293h1v1h-1zM227 301h1v1h-1zM227 309h1v1h-1zM227 317h1v1h-1zM227 325h1v1h-1zM227 332h1v1h-1zM227 340h1v1h-1zM227 348h1v1h-1zM227 356h1v1h-1zM227 364h1v1h-1zM235 136h1v1h-1zM235 144h1v1h-1zM235 152h1v1h-1zM235 160h1v1h-1zM235 168h1v1h-1zM235 176h1v1h-1zM235 183h1v1h-1zM235 191h1v1h-1zM235 199h1v1h-1zM235 207h1v1h-1zM235 215h1v1h-1zM235 223h1v1h-1zM235 230h1v1h-1zM235 238h1v1h-1zM235 246h1v1h-1zM235 254h1v1h-1zM235 262h1v1h-1zM235 270h1v1h-1zM235 278h1v1h-1zM235 285h1v1h-1zM235 293h1v1h-1zM235 301h1v1h-1zM235 309h1v1h-1zM235 317h1v1h-1zM235 325h1v1h-1zM235 332h1v1h-1zM235 340h1v1h-1zM235 348h1v1h-1zM235 356h1v1h-1zM235 364h1v1h-1zM243 136h1v1h-1zM243 144h1v1h-1zM243 152h1v1h-1zM243 160h1v1h-1zM243 168h1v1h-1zM243 176h1v1h-1zM243 183h1v1h-1zM243 191h1v1h-1zM243 199h1v1h-1zM243 207h1v1h-1zM243 215h1v1h-1zM243 223h1v1h-1zM243 230h1v1h-1zM243 238h1v1h-1zM243 246h1v1h-1zM243 254h1v1h-1zM243 262h1v1h-1zM243 270h1v1h-1zM243 278h1v1h-1zM243 285h1v1h-1zM243 293h1v1h-1zM243 301h1v1h-1zM243 309h1v1h-1zM243 317h1v1h-1zM243 325h1v1h-1zM243 332h1v1h-1zM243 340h1v1h-1zM243 348h1v1h-1zM243 356h1v1h-1zM243 364h1v1h-1zM251 136h1v1h-1zM251 144h1v1h-1zM251 152h1v1h-1zM251 160h1v1h-1zM251 168h1v1h-1zM251 176h1v1h-1zM251 183h1v1h-1zM251 191h1v1h-1zM251 199h1v1h-1zM251 207h1v1h-1zM251 215h1v1h-1zM251 223h1v1h-1zM251 230h1v1h-1zM251 238h1v1h-1zM251 246h1v1h-1zM251 254h1v1h-1zM251 262h1v1h-1zM251 270h1v1h-1zM251 278h1v1h-1zM251 285h1v1h-1zM251 293h1v1h-1zM251 301h1v1h-1zM251 309h1v1h-1zM251 317h1v1h-1zM251 325h1v1h-1zM251 332h1v1h-1zM251 340h1v1h-1zM251 348h1v1h-1zM251 356h1v1h-1zM251 364h1v1h-1zM259 136h1v1h-1zM259 144h1v1h-1zM259 152h1v1h-1zM259 160h1v1h-1zM259 168h1v1h-1zM259 176h1v1h-1zM259 183h1v1h-1zM259 191h1v1h-1zM259 199h1v1h-1zM259 207h1v1h-1zM259 215h1v1h-1zM259 223h1v1h-1zM259 230h1v1h-1zM259 238h1v1h-1zM259 246h1v1h-1zM259 254h1v1h-1zM259 262h1v1h-1zM259 270h1v1h-1zM259 278h1v1h-1zM259 285h1v1h-1zM259 293h1v1h-1zM259 301h1v1h-1zM259 309h1v1h-1zM259 317h1v1h-1zM259 325h1v1h-1zM259 332h1v1h-1zM259 340h1v1h-1zM259 348h1v1h-1zM259 356h1v1h-1zM259 364h1v1h-1zM267 136h1v1h-1zM267 144h1v1h-1zM267 152h1v1h-1zM267 160h1v1h-1zM267 168h1v1h-1zM267 176h1v1h-1zM267 183h1v1h-1zM267 191h1v1h-1zM267 199h1v1h-1zM267 207h1v1h-1zM267 215h1v1h-1zM267 223h1v1h-1zM267 230h1v1h-1zM267 238h1v1h-1zM267 246h1v1h-1zM267 254h1v1h-1zM267 262h1v1h-1zM267 270h1v1h-1zM267 278h1v1h-1zM267 285h1v1h-1zM267 293h1v1h-1zM267 301h1v1h-1zM267 309h1v1h-1zM267 317h1v1h-1zM267 325h1v1h-1zM267 332h1v1h-1zM267 340h1v1h-1zM267 348h1v1h-1zM267 356h1v1h-1zM267 364h1v1h-1zM274 136h1v1h-1zM274 144h1v1h-1zM274 152h1v1h-1zM274 160h1v1h-1zM274 168h1v1h-1zM274 176h1v1h-1zM274 183h1v1h-1zM274 191h1v1h-1zM274 199h1v1h-1zM274 207h1v1h-1zM274 215h1v1h-1zM274 223h1v1h-1zM274 230h1v1h-1zM274 238h1v1h-1zM274 246h1v1h-1zM274 254h1v1h-1zM274 262h1v1h-1zM274 270h1v1h-1zM274 278h1v1h-1zM274 285h1v1h-1zM274 293h1v1h-1zM274 301h1v1h-1zM274 309h1v1h-1zM274 317h1v1h-1zM274 325h1v1h-1zM274 332h1v1h-1zM274 340h1v1h-1zM274 348h1v1h-1zM274 356h1v1h-1zM274 364h1v1h-1zM282 136h1v1h-1zM282 144h1v1h-1zM282 152h1v1h-1zM282 160h1v1h-1zM282 168h1v1h-1zM282 176h1v1h-1zM282 183h1v1h-1zM282 191h1v1h-1zM282 199h1v1h-1zM282 207h1v1h-1zM282 215h1v1h-1zM282 223h1v1h-1zM282 230h1v1h-1zM282 238h1v1h-1zM282 246h1v1h-1zM282 254h1v1h-1zM282 262h1v1h-1zM282 270h1v1h-1zM282 278h1v1h-1zM282 285h1v1h-1zM282 293h1v1h-1zM282 301h1v1h-1zM282 309h1v1h-1zM282 317h1v1h-1zM282 325h1v1h-1zM282 332h1v1h-1zM282 340h1v1h-1zM282 348h1v1h-1zM282 356h1v1h-1zM282 364h1v1h-1zM290 136h1v1h-1zM290 144h1v1h-1zM290 152h1v1h-1zM290 160h1v1h-1zM290 168h1v1h-1zM290 176h1v1h-1zM290 183h1v1h-1zM290 191h1v1h-1zM290 199h1v1h-1zM290 207h1v1h-1zM290 215h1v1h-1zM290 223h1v1h-1zM290 230h1v1h-1zM290 238h1v1h-1zM290 246h1v1h-1zM290 254h1v1h-1zM290 262h1v1h-1zM290 270h1v1h-1zM290 278h1v1h-1zM290 285h1v1h-1zM290 293h1v1h-1zM290 301h1v1h-1zM290 309h1v1h-1zM290 317h1v1h-1zM290 325h1v1h-1zM290 332h1v1h-1zM290 340h1v1h-1zM290 348h1v1h-1zM290 356h1v1h-1zM290 364h1v1h-1zM298 136h1v1h-1zM298 144h1v1h-1zM298 152h1v1h-1zM298 160h1v1h-1zM298 168h1v1h-1zM298 176h1v1h-1zM298 183h1v1h-1zM298 191h1v1h-1zM298 199h1v1h-1zM298 207h1v1h-1zM298 215h1v1h-1zM298 223h1v1h-1zM298 230h1v1h-1zM298 238h1v1h-1zM298 246h1v1h-1zM298 254h1v1h-1zM298 262h1v1h-1zM298 270h1v1h-1zM298 278h1v1h-1zM298 285h1v1h-1zM298 293h1v1h-1zM298 301h1v1h-1zM298 309h1v1h-1zM298 317h1v1h-1zM298 325h1v1h-1zM298 332h1v1h-1zM298 340h1v1h-1zM298 348h1v1h-1zM298 356h1v1h-1zM298 364h1v1h-1zM306 136h1v1h-1zM306 144h1v1h-1zM306 152h1v1h-1zM306 160h1v1h-1zM306 168h1v1h-1zM306 176h1v1h-1zM306 183h1v1h-1zM306 191h1v1h-1zM306 199h1v1h-1zM306 207h1v1h-1zM306 215h1v1h-1zM306 223h1v1h-1zM306 230h1v1h-1zM306 238h1v1h-1zM306 246h1v1h-1zM306 254h1v1h-1zM306 262h1v1h-1zM306 270h1v1h-1zM306 278h1v1h-1zM306 285h1v1h-1zM306 293h1v1h-1zM306 301h1v1h-1zM306 309h1v1h-1zM306 317h1v1h-1zM306 325h1v1h-1zM306 332h1v1h-1zM306 340h1v1h-1zM306 348h1v1h-1zM306 356h1v1h-1zM306 364h1v1h-1zM314 136h1v1h-1zM314 144h1v1h-1zM314 152h1v1h-1zM314 160h1v1h-1zM314 168h1v1h-1zM314 176h1v1h-1zM314 183h1v1h-1zM314 191h1v1h-1zM314 199h1v1h-1zM314 207h1v1h-1zM314 215h1v1h-1zM314 223h1v1h-1zM314 230h1v1h-1zM314 238h1v1h-1zM314 246h1v1h-1zM314 254h1v1h-1zM314 262h1v1h-1zM314 270h1v1h-1zM314 278h1v1h-1zM314 285h1v1h-1zM314 293h1v1h-1zM314 301h1v1h-1zM314 309h1v1h-1zM314 317h1v1h-1zM314 325h1v1h-1zM314 332h1v1h-1zM314 340h1v1h-1zM314 348h1v1h-1zM314 356h1v1h-1zM314 364h1v1h-1zM322 136h1v1h-1zM322 144h1v1h-1zM322 152h1v1h-1zM322 160h1v1h-1zM322 168h1v1h-1zM322 176h1v1h-1zM322 183h1v1h-1zM322 191h1v1h-1zM322 199h1v1h-1zM322 207h1v1h-1zM322 215h1v1h-1zM322 223h1v1h-1zM322 230h1v1h-1zM322 238h1v1h-1zM322 246h1v1h-1zM322 254h1v1h-1zM322 262h1v1h-1zM322 270h1v1h-1zM322 278h1v1h-1zM322 285h1v1h-1zM322 293h1v1h-1zM322 301h1v1h-1zM322 309h1v1h-1zM322 317h1v1h-1zM322 325h1v1h-1zM322 332h1v1h-1zM322 340h1v1h-1zM322 348h1v1h-1zM322 356h1v1h-1zM322 364h1v1h-1zM329 136h1v1h-1zM329 144h1v1h-1zM329 152h1v1h-1zM329 160h1v1h-1zM329 168h1v1h-1zM329 176h1v1h-1zM329 183h1v1h-1zM329 191h1v1h-1zM329 199h1v1h-1zM329 207h1v1h-1zM329 215h1v1h-1zM329 223h1v1h-1zM329 230h1v1h-1zM329 238h1v1h-1zM329 246h1v1h-1zM329 254h1v1h-1zM329 262h1v1h-1zM329 270h1v1h-1zM329 278h1v1h-1zM329 285h1v1h-1zM329 293h1v1h-1zM329 301h1v1h-1zM329 309h1v1h-1zM329 317h1v1h-1zM329 325h1v1h-1zM329 332h1v1h-1zM329 340h1v1h-1zM329 348h1v1h-1zM329 356h1v1h-1zM329 364h1v1h-1zM337 136h1v1h-1zM337 144h1v1h-1zM337 152h1v1h-1zM337 160h1v1h-1zM337 168h1v1h-1zM337 176h1v1h-1zM337 183h1v1h-1zM337 191h1v1h-1zM337 199h1v1h-1zM337 207h1v1h-1zM337 215h1v1h-1zM337 223h1v1h-1zM337 230h1v1h-1zM337 238h1v1h-1zM337 246h1v1h-1zM337 254h1v1h-1zM337 262h1v1h-1zM337 270h1v1h-1zM337 278h1v1h-1zM337 285h1v1h-1zM337 293h1v1h-1zM337 301h1v1h-1zM337 309h1v1h-1zM337 317h1v1h-1zM337 325h1v1h-1zM337 332h1v1h-1zM337 340h1v1h-1zM337 348h1v1h-1zM337 356h1v1h-1zM337 364h1v1h-1zM345 136h1v1h-1zM345 144h1v1h-1zM345 152h1v1h-1zM345 160h1v1h-1zM345 168h1v1h-1zM345 176h1v1h-1zM345 183h1v1h-1zM345 191h1v1h-1zM345 199h1v1h-1zM345 207h1v1h-1zM345 215h1v1h-1zM345 223h1v1h-1zM345 230h1v1h-1zM345 238h1v1h-1zM345 246h1v1h-1zM345 254h1v1h-1zM345 262h1v1h-1zM345 270h1v1h-1zM345 278h1v1h-1zM345 285h1v1h-1zM345 293h1v1h-1zM345 301h1v1h-1zM345 309h1v1h-1zM345 317h1v1h-1zM345 325h1v1h-1zM345 332h1v1h-1zM345 340h1v1h-1zM345 348h1v1h-1zM345 356h1v1h-1zM345 364h1v1h-1zM353 136h1v1h-1zM353 144h1v1h-1zM353 152h1v1h-1zM353 160h1v1h-1zM353 168h1v1h-1zM353 176h1v1h-1zM353 183h1v1h-1zM353 191h1v1h-1zM353 199h1v1h-1zM353 207h1v1h-1zM353 215h1v1h-1zM353 223h1v1h-1zM353 230h1v1h-1zM353 238h1v1h-1zM353 246h1v1h-1zM353 254h1v1h-1zM353 262h1v1h-1zM353 270h1v1h-1zM353 278h1v1h-1zM353 285h1v1h-1zM353 293h1v1h-1zM353 301h1v1h-1zM353 309h1v1h-1zM353 317h1v1h-1zM353 325h1v1h-1zM353 332h1v1h-1zM353 340h1v1h-1zM353 348h1v1h-1zM353 356h1v1h-1zM353 364h1v1h-1zM361 136h1v1h-1zM361 144h1v1h-1zM361 152h1v1h-1zM361 160h1v1h-1zM361 168h1v1h-1zM361 176h1v1h-1zM361 183h1v1h-1zM361 191h1v1h-1zM361 199h1v1h-1zM361 207h1v1h-1zM361 215h1v1h-1zM361 223h1v1h-1zM361 230h1v1h-1zM361 238h1v1h-1zM361 246h1v1h-1zM361 254h1v1h-1zM361 262h1v1h-1zM361 270h1v1h-1zM361 278h1v1h-1zM361 285h1v1h-1zM361 293h1v1h-1zM361 301h1v1h-1zM361 309h1v1h-1zM361 317h1v1h-1zM361 325h1v1h-1zM361 332h1v1h-1zM361 340h1v1h-1zM361 348h1v1h-1zM361 356h1v1h-1zM361 364h1v1h-1zM369 136h1v1h-1zM369 144h1v1h-1zM369 152h1v1h-1zM369 160h1v1h-1zM369 168h1v1h-1zM369 176h1v1h-1zM369 183h1v1h-1zM369 191h1v1h-1zM369 199h1v1h-1zM369 207h1v1h-1zM369 215h1v1h-1zM369 223h1v1h-1zM369 230h1v1h-1zM369 238h1v1h-1zM369 246h1v1h-1zM369 254h1v1h-1zM369 262h1v1h-1zM369 270h1v1h-1zM369 278h1v1h-1zM369 285h1v1h-1zM369 293h1v1h-1zM369 301h1v1h-1zM369 309h1v1h-1zM369 317h1v1h-1zM369 325h1v1h-1zM369 332h1v1h-1zM369 340h1v1h-1zM369 348h1v1h-1zM369 356h1v1h-1zM369 364h1v1h-1zM376 136h1v1h-1zM376 144h1v1h-1zM376 152h1v1h-1zM376 160h1v1h-1zM376 168h1v1h-1zM376 176h1v1h-1zM376 183h1v1h-1zM376 191h1v1h-1zM376 199h1v1h-1zM376 207h1v1h-1zM376 215h1v1h-1zM376 223h1v1h-1zM376 230h1v1h-1zM376 238h1v1h-1zM376 246h1v1h-1zM376 254h1v1h-1zM376 262h1v1h-1zM376 270h1v1h-1zM376 278h1v1h-1zM376 285h1v1h-1zM376 293h1v1h-1zM376 301h1v1h-1zM376 309h1v1h-1zM376 317h1v1h-1zM376 325h1v1h-1zM376 332h1v1h-1zM376 340h1v1h-1zM376 348h1v1h-1zM376 356h1v1h-1zM376 364h1v1h-1zM384 136h1v1h-1zM384 144h1v1h-1zM384 152h1v1h-1zM384 160h1v1h-1zM384 168h1v1h-1zM384 176h1v1h-1zM384 183h1v1h-1zM384 191h1v1h-1zM384 199h1v1h-1zM384 207h1v1h-1zM384 215h1v1h-1zM384 223h1v1h-1zM384 230h1v1h-1zM384 238h1v1h-1zM384 246h1v1h-1zM384 254h1v1h-1zM384 262h1v1h-1zM384 270h1v1h-1zM384 278h1v1h-1zM384 285h1v1h-1zM384 293h1v1h-1zM384 301h1v1h-1zM384 309h1v1h-1zM384 317h1v1h-1zM384 325h1v1h-1zM384 332h1v1h-1zM384 340h1v1h-1zM384 348h1v1h-1zM384 356h1v1h-1zM384 364h1v1h-1zM392 136h1v1h-1zM392 144h1v1h-1zM392 152h1v1h-1zM392 160h1v1h-1zM392 168h1v1h-1zM392 176h1v1h-1zM392 183h1v1h-1zM392 191h1v1h-1zM392 199h1v1h-1zM392 207h1v1h-1zM392 215h1v1h-1zM392 223h1v1h-1zM392 230h1v1h-1zM392 238h1v1h-1zM392 246h1v1h-1zM392 254h1v1h-1zM392 262h1v1h-1zM392 270h1v1h-1zM392 278h1v1h-1zM392 285h1v1h-1zM392 293h1v1h-1zM392 301h1v1h-1zM392 309h1v1h-1zM392 317h1v1h-1zM392 325h1v1h-1zM392 332h1v1h-1zM392 340h1v1h-1zM392 348h1v1h-1zM392 356h1v1h-1zM392 364h1v1h-1zM400 136h1v1h-1zM400 144h1v1h-1zM400 152h1v1h-1zM400 160h1v1h-1zM400 168h1v1h-1zM400 176h1v1h-1zM400 183h1v1h-1zM400 191h1v1h-1zM400 199h1v1h-1zM400 207h1v1h-1zM400 215h1v1h-1zM400 223h1v1h-1zM400 230h1v1h-1zM400 238h1v1h-1zM400 246h1v1h-1zM400 254h1v1h-1zM400 262h1v1h-1zM400 270h1v1h-1zM400 278h1v1h-1zM400 285h1v1h-1zM400 293h1v1h-1zM400 301h1v1h-1zM400 309h1v1h-1zM400 317h1v1h-1zM400 325h1v1h-1zM400 332h1v1h-1zM400 340h1v1h-1zM400 348h1v1h-1zM400 356h1v1h-1zM400 364h1v1h-1zM408 136h1v1h-1zM408 144h1v1h-1zM408 152h1v1h-1zM408 160h1v1h-1zM408 168h1v1h-1zM408 176h1v1h-1zM408 183h1v1h-1zM408 191h1v1h-1zM408 199h1v1h-1zM408 207h1v1h-1zM408 215h1v1h-1zM408 223h1v1h-1zM408 230h1v1h-1zM408 238h1v1h-1zM408 246h1v1h-1zM408 254h1v1h-1zM408 262h1v1h-1zM408 270h1v1h-1zM408 278h1v1h-1zM408 285h1v1h-1zM408 293h1v1h-1zM408 301h1v1h-1zM408 309h1v1h-1zM408 317h1v1h-1zM408 325h1v1h-1zM408 332h1v1h-1zM408 340h1v1h-1zM408 348h1v1h-1zM408 356h1v1h-1zM408 364h1v1h-1zM416 136h1v1h-1zM416 144h1v1h-1zM416 152h1v1h-1zM416 160h1v1h-1zM416 168h1v1h-1zM416 176h1v1h-1zM416 183h1v1h-1zM416 191h1v1h-1zM416 199h1v1h-1zM416 207h1v1h-1zM416 215h1v1h-1zM416 223h1v1h-1zM416 230h1v1h-1zM416 238h1v1h-1zM416 246h1v1h-1zM416 254h1v1h-1zM416 262h1v1h-1zM416 270h1v1h-1zM416 278h1v1h-1zM416 285h1v1h-1zM416 293h1v1h-1zM416 301h1v1h-1zM416 309h1v1h-1zM416 317h1v1h-1zM416 325h1v1h-1zM416 332h1v1h-1zM416 340h1v1h-1zM416 348h1v1h-1zM416 356h1v1h-1zM416 364h1v1h-1zM424 136h1v1h-1zM424 144h1v1h-1zM424 152h1v1h-1zM424 160h1v1h-1zM424 168h1v1h-1zM424 176h1v1h-1zM424 183h1v1h-1zM424 191h1v1h-1zM424 199h1v1h-1zM424 207h1v1h-1zM424 215h1v1h-1zM424 223h1v1h-1zM424 230h1v1h-1zM424 238h1v1h-1zM424 246h1v1h-1zM424 254h1v1h-1zM424 262h1v1h-1zM424 270h1v1h-1zM424 278h1v1h-1zM424 285h1v1h-1zM424 293h1v1h-1zM424 301h1v1h-1zM424 309h1v1h-1zM424 317h1v1h-1zM424 325h1v1h-1zM424 332h1v1h-1zM424 340h1v1h-1zM424 348h1v1h-1zM424 356h1v1h-1zM424 364h1v1h-1zM431 136h1v1h-1zM431 144h1v1h-1zM431 152h1v1h-1zM431 160h1v1h-1zM431 168h1v1h-1zM431 176h1v1h-1zM431 183h1v1h-1zM431 191h1v1h-1zM431 199h1v1h-1zM431 207h1v1h-1zM431 215h1v1h-1zM431 223h1v1h-1zM431 230h1v1h-1zM431 238h1v1h-1zM431 246h1v1h-1zM431 254h1v1h-1zM431 262h1v1h-1zM431 270h1v1h-1zM431 278h1v1h-1zM431 285h1v1h-1zM431 293h1v1h-1zM431 301h1v1h-1zM431 309h1v1h-1zM431 317h1v1h-1zM431 325h1v1h-1zM431 332h1v1h-1zM431 340h1v1h-1zM431 348h1v1h-1zM431 356h1v1h-1zM431 364h1v1h-1zM439 136h1v1h-1zM439 144h1v1h-1zM439 152h1v1h-1zM439 160h1v1h-1zM439 168h1v1h-1zM439 176h1v1h-1zM439 183h1v1h-1zM439 191h1v1h-1zM439 199h1v1h-1zM439 207h1v1h-1zM439 215h1v1h-1zM439 223h1v1h-1zM439 230h1v1h-1zM439 238h1v1h-1zM439 246h1v1h-1zM439 254h1v1h-1zM439 262h1v1h-1zM439 270h1v1h-1zM439 278h1v1h-1zM439 285h1v1h-1zM439 293h1v1h-1zM439 301h1v1h-1zM439 309h1v1h-1zM439 317h1v1h-1zM439 325h1v1h-1zM439 332h1v1h-1zM439 340h1v1h-1zM439 348h1v1h-1zM439 356h1v1h-1zM439 364h1v1h-1zM447 136h1v1h-1zM447 144h1v1h-1zM447 152h1v1h-1zM447 160h1v1h-1zM447 168h1v1h-1zM447 176h1v1h-1zM447 183h1v1h-1zM447 191h1v1h-1zM447 199h1v1h-1zM447 207h1v1h-1zM447 215h1v1h-1zM447 223h1v1h-1zM447 230h1v1h-1zM447 238h1v1h-1zM447 246h1v1h-1zM447 254h1v1h-1zM447 262h1v1h-1zM447 270h1v1h-1zM447 278h1v1h-1zM447 285h1v1h-1zM447 293h1v1h-1zM447 301h1v1h-1zM447 309h1v1h-1zM447 317h1v1h-1zM447 325h1v1h-1zM447 332h1v1h-1zM447 340h1v1h-1zM447 348h1v1h-1zM447 356h1v1h-1zM447 364h1v1h-1zM455 136h1v1h-1zM455 144h1v1h-1zM455 152h1v1h-1zM455 160h1v1h-1zM455 168h1v1h-1zM455 176h1v1h-1zM455 183h1v1h-1zM455 191h1v1h-1zM455 199h1v1h-1zM455 207h1v1h-1zM455 215h1v1h-1zM455 223h1v1h-1zM455 230h1v1h-1zM455 238h1v1h-1zM455 246h1v1h-1zM455 254h1v1h-1zM455 262h1v1h-1zM455 270h1v1h-1zM455 278h1v1h-1zM455 285h1v1h-1zM455 293h1v1h-1zM455 301h1v1h-1zM455 309h1v1h-1zM455 317h1v1h-1zM455 325h1v1h-1zM455 332h1v1h-1zM455 340h1v1h-1zM455 348h1v1h-1zM455 356h1v1h-1zM455 364h1v1h-1zM463 136h1v1h-1zM463 144h1v1h-1zM463 152h1v1h-1zM463 160h1v1h-1zM463 168h1v1h-1zM463 176h1v1h-1zM463 183h1v1h-1zM463 191h1v1h-1zM463 199h1v1h-1zM463 207h1v1h-1zM463 215h1v1h-1zM463 223h1v1h-1zM463 230h1v1h-1zM463 238h1v1h-1zM463 246h1v1h-1zM463 254h1v1h-1zM463 262h1v1h-1zM463 270h1v1h-1zM463 278h1v1h-1zM463 285h1v1h-1zM463 293h1v1h-1zM463 301h1v1h-1zM463 309h1v1h-1zM463 317h1v1h-1zM463 325h1v1h-1zM463 332h1v1h-1zM463 340h1v1h-1zM463 348h1v1h-1zM463 356h1v1h-1zM463 364h1v1h-1zM471 136h1v1h-1zM471 144h1v1h-1zM471 152h1v1h-1zM471 160h1v1h-1zM471 168h1v1h-1zM471 176h1v1h-1zM471 183h1v1h-1zM471 191h1v1h-1zM471 199h1v1h-1zM471 207h1v1h-1zM471 215h1v1h-1zM471 223h1v1h-1zM471 230h1v1h-1zM471 238h1v1h-1zM471 246h1v1h-1zM471 254h1v1h-1zM471 262h1v1h-1zM471 270h1v1h-1zM471 278h1v1h-1zM471 285h1v1h-1zM471 293h1v1h-1zM471 301h1v1h-1zM471 309h1v1h-1zM471 317h1v1h-1zM471 325h1v1h-1zM471 332h1v1h-1zM471 340h1v1h-1zM471 348h1v1h-1zM471 356h1v1h-1zM471 364h1v1h-1zM478 136h1v1h-1zM478 144h1v1h-1zM478 152h1v1h-1zM478 160h1v1h-1zM478 168h1v1h-1zM478 176h1v1h-1zM478 183h1v1h-1zM478 191h1v1h-1zM478 199h1v1h-1zM478 207h1v1h-1zM478 215h1v1h-1zM478 223h1v1h-1zM478 230h1v1h-1zM478 238h1v1h-1zM478 246h1v1h-1zM478 254h1v1h-1zM478 262h1v1h-1zM478 270h1v1h-1zM478 278h1v1h-1zM478 285h1v1h-1zM478 293h1v1h-1zM478 301h1v1h-1zM478 309h1v1h-1zM478 317h1v1h-1zM478 325h1v1h-1zM478 332h1v1h-1zM478 340h1v1h-1zM478 348h1v1h-1zM478 356h1v1h-1zM478 364h1v1h-1zM486 136h1v1h-1zM486 144h1v1h-1zM486 152h1v1h-1zM486 160h1v1h-1zM486 168h1v1h-1zM486 176h1v1h-1zM486 183h1v1h-1zM486 191h1v1h-1zM486 199h1v1h-1zM486 207h1v1h-1zM486 215h1v1h-1zM486 223h1v1h-1zM486 230h1v1h-1zM486 238h1v1h-1zM486 246h1v1h-1zM486 254h1v1h-1zM486 262h1v1h-1zM486 270h1v1h-1zM486 278h1v1h-1zM486 285h1v1h-1zM486 293h1v1h-1zM486 301h1v1h-1zM486 309h1v1h-1zM486 317h1v1h-1zM486 325h1v1h-1zM486 332h1v1h-1zM486 340h1v1h-1zM486 348h1v1h-1zM486 356h1v1h-1zM486 364h1v1h-1zM494 136h1v1h-1zM494 144h1v1h-1zM494 152h1v1h-1zM494 160h1v1h-1zM494 168h1v1h-1zM494 176h1v1h-1zM494 183h1v1h-1zM494 191h1v1h-1zM494 199h1v1h-1zM494 207h1v1h-1zM494 215h1v1h-1zM494 223h1v1h-1zM494 230h1v1h-1zM494 238h1v1h-1zM494 246h1v1h-1zM494 254h1v1h-1zM494 262h1v1h-1zM494 270h1v1h-1zM494 278h1v1h-1zM494 285h1v1h-1zM494 293h1v1h-1zM494 301h1v1h-1zM494 309h1v1h-1zM494 317h1v1h-1zM494 325h1v1h-1zM494 332h1v1h-1zM494 340h1v1h-1zM494 348h1v1h-1zM494 356h1v1h-1zM494 364h1v1h-1zM502 136h1v1h-1zM502 144h1v1h-1zM502 152h1v1h-1zM502 160h1v1h-1zM502 168h1v1h-1zM502 176h1v1h-1zM502 183h1v1h-1zM502 191h1v1h-1zM502 199h1v1h-1zM502 207h1v1h-1zM502 215h1v1h-1zM502 223h1v1h-1zM502 230h1v1h-1zM502 238h1v1h-1zM502 246h1v1h-1zM502 254h1v1h-1zM502 262h1v1h-1zM502 270h1v1h-1zM502 278h1v1h-1zM502 285h1v1h-1zM502 293h1v1h-1zM502 301h1v1h-1zM502 309h1v1h-1zM502 317h1v1h-1zM502 325h1v1h-1zM502 332h1v1h-1zM502 340h1v1h-1zM502 348h1v1h-1zM502 356h1v1h-1zM502 364h1v1h-1zM510 136h1v1h-1zM510 144h1v1h-1zM510 152h1v1h-1zM510 160h1v1h-1zM510 168h1v1h-1zM510 176h1v1h-1zM510 183h1v1h-1zM510 191h1v1h-1zM510 199h1v1h-1zM510 207h1v1h-1zM510 215h1v1h-1zM510 223h1v1h-1zM510 230h1v1h-1zM510 238h1v1h-1zM510 246h1v1h-1zM510 254h1v1h-1zM510 262h1v1h-1zM510 270h1v1h-1zM510 278h1v1h-1zM510 285h1v1h-1zM510 293h1v1h-1zM510 301h1v1h-1zM510 309h1v1h-1zM510 317h1v1h-1zM510 325h1v1h-1zM510 332h1v1h-1zM510 340h1v1h-1zM510 348h1v1h-1zM510 356h1v1h-1zM510 364h1v1h-1zM518 136h1v1h-1zM518 144h1v1h-1zM518 152h1v1h-1zM518 160h1v1h-1zM518 168h1v1h-1zM518 176h1v1h-1zM518 183h1v1h-1zM518 191h1v1h-1zM518 199h1v1h-1zM518 207h1v1h-1zM518 215h1v1h-1zM518 223h1v1h-1zM518 230h1v1h-1zM518 238h1v1h-1zM518 246h1v1h-1zM518 254h1v1h-1zM518 262h1v1h-1zM518 270h1v1h-1zM518 278h1v1h-1zM518 285h1v1h-1zM518 293h1v1h-1zM518 301h1v1h-1zM518 309h1v1h-1zM518 317h1v1h-1zM518 325h1v1h-1zM518 332h1v1h-1zM518 340h1v1h-1zM518 348h1v1h-1zM518 356h1v1h-1zM518 364h1v1h-1zM526 136h1v1h-1zM526 144h1v1h-1zM526 152h1v1h-1zM526 160h1v1h-1zM526 168h1v1h-1zM526 176h1v1h-1zM526 183h1v1h-1zM526 191h1v1h-1zM526 199h1v1h-1zM526 207h1v1h-1zM526 215h1v1h-1zM526 223h1v1h-1zM526 230h1v1h-1zM526 238h1v1h-1zM526 246h1v1h-1zM526 254h1v1h-1zM526 262h1v1h-1zM526 270h1v1h-1zM526 278h1v1h-1zM526 285h1v1h-1zM526 293h1v1h-1zM526 301h1v1h-1zM526 309h1v1h-1zM526 317h1v1h-1zM526 325h1v1h-1zM526 332h1v1h-1zM526 340h1v1h-1zM526 348h1v1h-1zM526 356h1v1h-1zM526 364h1v1h-1zM533 136h1v1h-1zM533 144h1v1h-1zM533 152h1v1h-1zM533 160h1v1h-1zM533 168h1v1h-1zM533 176h1v1h-1zM533 183h1v1h-1zM533 191h1v1h-1zM533 199h1v1h-1zM533 207h1v1h-1zM533 215h1v1h-1zM533 223h1v1h-1zM533 230h1v1h-1zM533 238h1v1h-1zM533 246h1v1h-1zM533 254h1v1h-1zM533 262h1v1h-1zM533 270h1v1h-1zM533 278h1v1h-1zM533 285h1v1h-1zM533 293h1v1h-1zM533 301h1v1h-1zM533 309h1v1h-1zM533 317h1v1h-1zM533 325h1v1h-1zM533 332h1v1h-1zM533 340h1v1h-1zM533 348h1v1h-1zM533 356h1v1h-1zM533 364h1v1h-1zM541 136h1v1h-1zM541 144h1v1h-1zM541 152h1v1h-1zM541 160h1v1h-1zM541 168h1v1h-1zM541 176h1v1h-1zM541 183h1v1h-1zM541 191h1v1h-1zM541 199h1v1h-1zM541 207h1v1h-1zM541 215h1v1h-1zM541 223h1v1h-1zM541 230h1v1h-1zM541 238h1v1h-1zM541 246h1v1h-1zM541 254h1v1h-1zM541 262h1v1h-1zM541 270h1v1h-1zM541 278h1v1h-1zM541 285h1v1h-1zM541 293h1v1h-1zM541 301h1v1h-1zM541 309h1v1h-1zM541 317h1v1h-1zM541 325h1v1h-1zM541 332h1v1h-1zM541 340h1v1h-1zM541 348h1v1h-1zM541 356h1v1h-1zM541 364h1v1h-1zM549 136h1v1h-1zM549 144h1v1h-1zM549 152h1v1h-1zM549 160h1v1h-1zM549 168h1v1h-1zM549 176h1v1h-1zM549 183h1v1h-1zM549 191h1v1h-1zM549 199h1v1h-1zM549 207h1v1h-1zM549 215h1v1h-1zM549 223h1v1h-1zM549 230h1v1h-1zM549 238h1v1h-1zM549 246h1v1h-1zM549 254h1v1h-1zM549 262h1v1h-1zM549 270h1v1h-1zM549 278h1v1h-1zM549 285h1v1h-1zM549 293h1v1h-1zM549 301h1v1h-1zM549 309h1v1h-1zM549 317h1v1h-1zM549 325h1v1h-1zM549 332h1v1h-1zM549 340h1v1h-1zM549 348h1v1h-1zM549 356h1v1h-1zM549 364h1v1h-1z" fill="#cacaf6"/></svg>
<svg style="left:0;top:0" width="1024" height="417" viewBox="0 0 1024 417"><path d="M39.5 367V144.5H541.5V367" stroke="#a6a6f2" stroke-width="1" fill="none" stroke-dasharray="2.4 0.6 1.2 0.6" shape-rendering="crispEdges"/></svg>
<svg style="left:0;top:0" width="1024" height="417" viewBox="0 0 1024 417"><path d="M68 146.5H128L139.5 158H226V197H68Z" fill="#a9abf6"/></svg>
<span class="t" style="left:72.2px;top:150.0px;font-size:7.2px;color:#8486c8;font-weight:normal;transform:scaleX(0.936);transform-origin:0 0;">Name: TextField1</span>
<div style="left:70.0px;top:160.0px;width:154.0px;height:22.5px;background:#fff;border-top:1px solid #f09a3e;border-left:1px solid #f09a3e"></div>
<div style="left:135.0px;top:160.0px;width:1.0px;height:23.0px;background:#f09a3e"></div>
<div style="left:136.0px;top:162.0px;width:86.0px;height:18.0px;background:transparent;border:1px solid #6e6e6e;border-left-color:#c8c8c8"></div>
<svg style="left:0;top:0" width="1024" height="417" viewBox="0 0 1024 417"><path d="M78 168h1v1h-1zM78 176h1v1h-1zM86 168h1v1h-1zM86 176h1v1h-1zM94 168h1v1h-1zM94 176h1v1h-1zM102 168h1v1h-1zM102 176h1v1h-1zM110 168h1v1h-1zM110 176h1v1h-1zM117 168h1v1h-1zM117 176h1v1h-1zM125 168h1v1h-1zM125 176h1v1h-1zM133 168h1v1h-1zM133 176h1v1h-1zM141 168h1v1h-1zM141 176h1v1h-1zM149 168h1v1h-1zM149 176h1v1h-1zM157 168h1v1h-1zM157 176h1v1h-1zM164 168h1v1h-1zM164 176h1v1h-1zM172 168h1v1h-1zM172 176h1v1h-1zM180 168h1v1h-1zM180 176h1v1h-1zM188 168h1v1h-1zM188 176h1v1h-1zM196 168h1v1h-1zM196 176h1v1h-1zM204 168h1v1h-1zM204 176h1v1h-1zM212 168h1v1h-1zM212 176h1v1h-1zM219 168h1v1h-1zM219 176h1v1h-1z" fill="#dcdcf8"/></svg>
<span class="t" style="left:73.7px;top:168.0px;font-size:9.2px;color:#000;font-weight:normal;transform:scaleX(0.950);transform-origin:0 0;">Text Field</span>
<div style="left:71.0px;top:184.0px;width:46.0px;height:11.0px;background:#a9abf6;border:1px solid #a4a6f0"></div>
<span class="t" style="left:72.2px;top:186.0px;font-size:7.2px;color:#222;font-weight:normal;transform:scaleX(0.935);transform-origin:0 0;">Text Field</span>
<svg style="left:109px;top:188px" width="6" height="4" viewBox="0 0 6 4"><path d="M0 0H6L3 4Z" fill="#111"/></svg>
<div style="left:215.0px;top:187.0px;width:6.0px;height:4.0px;background:#777"></div>
<div style="left:68.2px;top:157.4px;width:2.6px;height:2.6px;background:#2f90f0"></div>
<div style="left:68.2px;top:169.7px;width:2.6px;height:2.6px;background:#2f90f0"></div>
<div style="left:68.2px;top:182.1px;width:2.6px;height:2.6px;background:#2f90f0"></div>
<div style="left:145.5px;top:157.4px;width:2.6px;height:2.6px;background:#2f90f0"></div>
<div style="left:145.5px;top:182.1px;width:2.6px;height:2.6px;background:#2f90f0"></div>
<div style="left:223.6px;top:157.4px;width:2.6px;height:2.6px;background:#2f90f0"></div>
<div style="left:223.6px;top:169.7px;width:2.6px;height:2.6px;background:#2f90f0"></div>
<div style="left:223.6px;top:182.1px;width:2.6px;height:2.6px;background:#2f90f0"></div>
<div style="left:569.0px;top:120.0px;width:9.0px;height:246.5px;background:#f2f2f2"></div>
<svg style="left:572px;top:123px" width="5" height="3" viewBox="0 0 5 3"><path d="M0 3H5L2.5 0Z" fill="#333"/></svg>
<svg style="left:572px;top:360px" width="5" height="3" viewBox="0 0 5 3"><path d="M0 0H5L2.5 3Z" fill="#333"/></svg>
<div style="left:569.5px;top:130.5px;width:9.0px;height:77.5px;background:linear-gradient(90deg,#e8e8e8,#f8f8f8 50%,#e0e0e0);border:1px solid #c8c8c8;border-radius:2px"></div>
<div style="left:572.0px;top:168.0px;width:4.0px;height:1.0px;background:#777"></div>
<div style="left:572.0px;top:170.0px;width:4.0px;height:1.0px;background:#777"></div>
<div style="left:572.0px;top:172.0px;width:4.0px;height:1.0px;background:#777"></div>
<div style="left:0.0px;top:366.5px;width:1024.0px;height:4.5px;background:#ededed"></div>
<div style="left:0.0px;top:371.0px;width:1024.0px;height:11.0px;background:#bbbbbb"></div>
<div style="left:0.0px;top:381.0px;width:1024.0px;height:1.0px;background:#a8a8a8"></div>
<div style="left:0.0px;top:382.0px;width:1024.0px;height:7.0px;background:#fff"></div>
<div style="left:0.0px;top:389.0px;width:1024.0px;height:2.0px;background:linear-gradient(#c4c4c4,#808080)"></div>
<div style="left:0.0px;top:391.0px;width:1024.0px;height:12.5px;background:#dfe9f3"></div>
<div style="left:0.0px;top:403.0px;width:1024.0px;height:1.0px;background:#a9c3e0"></div>
<div style="left:0.0px;top:404.0px;width:1024.0px;height:13.0px;background:#e9eff7"></div>
<div style="left:578.5px;top:92.5px;width:150.0px;height:274.0px;background:#f0f0f0;border-left:1px solid #d2d2d2;border-right:1px solid #cfcfcf;border-bottom:1px solid #cfcfcf"></div>
<div style="left:583.0px;top:94.0px;width:126.0px;height:7.5px;background:linear-gradient(#a3bedc,#b4cbe6)"></div>
<svg style="left:713px;top:97.2px" width="3.8" height="2.6" viewBox="0 0 3.8 2.6"><path d="M0 0H3.8L1.9 2.6Z" fill="#111"/></svg>
<svg style="left:719.6px;top:95.8px" width="4.4" height="4.4" viewBox="0 0 4.4 4.4"><path d="M0.4 0.4L4 4M4 0.4L0.4 4" stroke="#111" stroke-width="1"/></svg>
<svg style="left:0;top:0" width="1024" height="417" viewBox="0 0 1024 417"><path d="M583 103.5H725.5V109.5L714 110L710 114H583Z" fill="#c4c4c4"/><path d="M652.5 104.5H706L715 114H657Z" fill="#e6e6e6" stroke="#9c9c9c" stroke-width="0.8"/><path d="M620.5 104.5H645L654 114H627Z" fill="#e6e6e6" stroke="#9c9c9c" stroke-width="0.8"/><path d="M583.5 114.5V105.5Q583.5 104.5 585 104.5H618L627.5 114" fill="#f0f0f0" stroke="#9c9c9c" stroke-width="0.8"/><path d="M584 114H626V116H584Z" fill="#f0f0f0"/></svg>
<span class="t" style="left:587.0px;top:106.0px;font-size:7.6px;color:#111;font-weight:bold;transform:scaleX(0.973);transform-origin:0 0;-webkit-text-stroke:0.3px currentColor">Object</span>
<svg style="left:613.5px;top:107.2px" width="6.5" height="5.8" viewBox="0 0 6.5 5.8"><rect x="0" y="0" width="6.5" height="5.8" rx="1" fill="#8a8a8a"/><path d="M1.6 1.3L4.9 4.5M4.9 1.3L1.6 4.5" stroke="#d8d8d8" stroke-width="0.8"/><circle cx="3.25" cy="2.9" r="1.1" fill="#111"/></svg>
<span class="t" style="left:627.4px;top:106.0px;font-size:7.2px;color:#222;font-weight:normal;transform:scaleX(0.981);transform-origin:0 0;">Border</span>
<span class="t" style="left:662.2px;top:106.0px;font-size:7.2px;color:#222;font-weight:normal;transform:scaleX(0.974);transform-origin:0 0;">Accessibility</span>
<div style="left:718.0px;top:111.0px;width:6.0px;height:3.5px;background:#777"></div>
<svg style="left:724px;top:112px" width="3" height="3" viewBox="0 0 3 3"><path d="M3 0V3H0Z" fill="#222"/></svg>
<div style="left:583.0px;top:114.0px;width:142.0px;height:1.0px;background:#f8f8f8"></div>
<svg style="left:0;top:0" width="1024" height="417" viewBox="0 0 1024 417"><path d="M583 128.5H724" stroke="#9c9c9c" stroke-width="0.8"/><path d="M588.5 128.5V120Q588.5 119 590 119H609L613.5 123.5V128.5Z" fill="#e2e2e2" stroke="#9c9c9c" stroke-width="0.8"/><path d="M613.5 128.5V120Q613.5 119 615 119H637L641.5 123.5V128.5Z" fill="#e2e2e2" stroke="#9c9c9c" stroke-width="0.8"/><path d="M641.5 129V120Q641.5 119 643 119H671L680.5 128.5" fill="#f0f0f0" stroke="#9c9c9c" stroke-width="0.8"/></svg>
<span class="t" style="left:592.0px;top:121.0px;font-size:7.2px;color:#222;font-weight:normal;transform:scaleX(0.961);transform-origin:0 0;">Field</span>
<span class="t" style="left:618.3px;top:121.0px;font-size:7.2px;color:#222;font-weight:normal;transform:scaleX(0.968);transform-origin:0 0;">Value</span>
<span class="t" style="left:646.0px;top:121.0px;font-size:7.2px;color:#222;font-weight:normal;transform:scaleX(1.008);transform-origin:0 0;">Binding</span>
<span class="t" style="left:583.0px;top:136.0px;font-size:7px;color:#222;font-weight:normal;transform:scaleX(0.897);transform-origin:0 0;">Name:</span>
<div style="left:610.0px;top:133.5px;width:90.0px;height:11.0px;background:#fff;border:1px solid #e8e8e8"></div>
<span class="t" style="left:612.5px;top:136.0px;font-size:7px;color:#222;font-weight:normal;transform:scaleX(0.965);transform-origin:0 0;">TextField1</span>
<div style="left:702.0px;top:133.5px;width:20.0px;height:11.5px;background:#ececec;border:1px solid #e2e2e2"></div>
<span class="t" style="left:705.0px;top:136.0px;font-size:7px;color:#222;font-weight:normal;">0</span>
<div style="left:583.0px;top:150.0px;width:140.0px;height:1.0px;background:#d2d2d2"></div>
<span class="t" style="left:583.0px;top:156.0px;font-size:7px;color:#222;font-weight:normal;transform:scaleX(0.948);transform-origin:0 0;">Data Binding (Open, Save, Submit):</span>
<div style="left:590.0px;top:166.0px;width:114.0px;height:11.5px;background:#fff;border:1px solid #e8e8e8"></div>
<span class="t" style="left:593.5px;top:169.0px;font-size:7px;color:#111;font-weight:normal;transform:scaleX(0.948);transform-origin:0 0;">No data binding</span>
<div style="left:705.5px;top:166.0px;width:14.5px;height:11.5px;background:linear-gradient(#f4f4f4,#dcdcdc);border:1px solid #707070;border-radius:2px"></div>
<div style="left:708.0px;top:168.8px;width:1.5px;height:1.2px;background:#222"></div>
<div style="left:710.5px;top:168.8px;width:5.5px;height:1.2px;background:#222"></div>
<div style="left:708.0px;top:171.3px;width:1.5px;height:1.2px;background:#222"></div>
<div style="left:710.5px;top:171.3px;width:5.5px;height:1.2px;background:#222"></div>
<div style="left:708.0px;top:173.8px;width:1.5px;height:1.2px;background:#222"></div>
<div style="left:710.5px;top:173.8px;width:5.5px;height:1.2px;background:#222"></div>
<svg style="left:716px;top:174px" width="3" height="3" viewBox="0 0 3 3"><path d="M3 0V3H0Z" fill="#111"/></svg>
<div style="left:583.0px;top:216.0px;width:144.0px;height:1.0px;background:#d2d2d2"></div>
<span class="t" style="left:583.0px;top:221.0px;font-size:7px;color:#222;font-weight:normal;transform:scaleX(0.951);transform-origin:0 0;">Import/Export Bindings (Execute WSDL):</span>
<div style="left:590.0px;top:231.5px;width:115.0px;height:11.5px;background:#eaeaea;border:1px solid #dedede"></div>
<div style="left:708.0px;top:236.0px;width:6.0px;height:4.0px;background:#888"></div>
<svg style="left:715px;top:238px" width="3" height="3" viewBox="0 0 3 3"><path d="M3 0V3H0Z" fill="#111"/></svg>
<div style="left:728.5px;top:92.5px;width:293.0px;height:274.0px;background:#f0f0f0;border-right:1px solid #cfcfcf;border-bottom:1px solid #cfcfcf"></div>
<div style="left:733.5px;top:94.0px;width:271.5px;height:7.5px;background:linear-gradient(#c2d2e2,#cddbe9)"></div>
<svg style="left:1009px;top:97.2px" width="3.8" height="2.6" viewBox="0 0 3.8 2.6"><path d="M0 0H3.8L1.9 2.6Z" fill="#111"/></svg>
<svg style="left:1015px;top:95.8px" width="4.4" height="4.4" viewBox="0 0 4.4 4.4"><path d="M0.4 0.4L4 4M4 0.4L0.4 4" stroke="#111" stroke-width="1"/></svg>
<svg style="left:0;top:0" width="1024" height="417" viewBox="0 0 1024 417"><path d="M733.5 103.5H1021.5V109.5L1012 110L1008 114H733.5Z" fill="#c4c4c4"/><path d="M733.5 114.5V105.5Q733.5 104.5 735 104.5H800L809.5 114" fill="#f0f0f0" stroke="#9c9c9c" stroke-width="0.8"/><path d="M734 114H808V116H734Z" fill="#f0f0f0"/></svg>
<span class="t" style="left:739.0px;top:106.0px;font-size:7.6px;color:#111;font-weight:bold;transform:scaleX(0.951);transform-origin:0 0;-webkit-text-stroke:0.3px currentColor">Object Library</span>
<svg style="left:790.8px;top:107.2px" width="6.5" height="5.8" viewBox="0 0 6.5 5.8"><rect x="0" y="0" width="6.5" height="5.8" rx="1" fill="#8a8a8a"/><path d="M1.6 1.3L4.9 4.5M4.9 1.3L1.6 4.5" stroke="#d8d8d8" stroke-width="0.8"/><circle cx="3.25" cy="2.9" r="1.1" fill="#111"/></svg>
<div style="left:1013.0px;top:111.0px;width:6.0px;height:3.5px;background:#777"></div>
<svg style="left:1019px;top:112px" width="3" height="3" viewBox="0 0 3 3"><path d="M3 0V3H0Z" fill="#222"/></svg>
<div style="left:733.5px;top:117.5px;width:287.0px;height:12.5px;background:linear-gradient(#f6f6f6,#dcdcdc);border-radius:2px 2px 0 0"></div>
<svg style="left:737px;top:122px" width="6" height="4" viewBox="0 0 6 4"><path d="M0 0H6L3 4Z" fill="#111"/></svg>
<span class="t" style="left:755.0px;top:119.0px;font-size:7.3px;color:#222;font-weight:normal;transform:scaleX(0.945);transform-origin:0 0;">Standard</span>
<div style="left:1011.0px;top:121.0px;width:6.0px;height:4.0px;background:#777"></div>
<svg style="left:1017px;top:122px" width="3" height="3" viewBox="0 0 3 3"><path d="M3 0V3H0Z" fill="#222"/></svg>
<div style="left:733.5px;top:130.0px;width:287.0px;height:80.5px;background:#fff"></div>
<svg style="left:735px;top:133.0px" width="10.5" height="7.5" viewBox="0 0 10.5 7.5"><rect x="0.6" y="0.6" width="9.3" height="6.3" rx="0" fill="#f2f2f2" stroke="#2a2a2a" stroke-width="1.1"/><path d="M2.6 2.4H4.6V5.1H2.6Z M5.6 2.2V5.2 M5.8 3.7L7.9 2.2 M5.8 3.7L7.9 5.2" stroke="#777" stroke-width="0.8" fill="none"/></svg>
<span class="t" style="left:747.0px;top:134.0px;font-size:7.3px;color:#111;font-weight:normal;transform:scaleX(1.052);transform-origin:0 0;">Button</span>
<svg style="left:804.7px;top:132.0px" width="10.5" height="9.5" viewBox="0 0 10.5 9.5"><rect x="0.5" y="0.5" width="9.5" height="8.5" fill="#f4f8fc" stroke="#8fb0d8"/><path d="M2 4.5L4.2 6.8L8.8 1.8" stroke="#38b038" stroke-width="2" fill="none"/></svg>
<span class="t" style="left:816.0px;top:134.0px;font-size:7.3px;color:#111;font-weight:normal;transform:scaleX(0.926);transform-origin:0 0;">Check Box</span>
<svg style="left:874px;top:133.0px" width="10" height="7.5" viewBox="0 0 10 7.5"><ellipse cx="5" cy="3.75" rx="4.5" ry="3.3" fill="#5b98d8" stroke="#2f68a8" stroke-width="0.9"/></svg>
<span class="t" style="left:885.4px;top:134.0px;font-size:7.3px;color:#111;font-weight:normal;transform:scaleX(0.933);transform-origin:0 0;">Circle</span>
<svg style="left:943px;top:131.5px" width="10.5" height="10" viewBox="0 0 10.5 10"><rect x="0.5" y="0.5" width="9.5" height="9" fill="#e6f0d8" stroke="#8cc070" stroke-dasharray="1 0.6"/><circle cx="6" cy="3.6" r="2.9" fill="#d86a78" opacity="0.85"/><path d="M6 3.6V9.5" stroke="#c04050" stroke-width="1.1"/></svg>
<span class="t" style="left:955.0px;top:134.0px;font-size:7.3px;color:#111;font-weight:normal;transform:scaleX(0.967);transform-origin:0 0;">Content Area</span>
<svg style="left:735px;top:140.56px" width="11" height="11" viewBox="0 0 11 11"><rect x="0.5" y="4.5" width="8.5" height="6" fill="#c8dcf0" stroke="#6a9ad0"/><path d="M1.5 9.5H6" stroke="#555" stroke-width="0.8"/><circle cx="6.8" cy="4" r="3.4" fill="#fff" stroke="#3cba3c" stroke-width="1.3"/><path d="M6.8 2V4H8.3" stroke="#555" stroke-width="0.7" fill="none"/></svg>
<span class="t" style="left:747.0px;top:145.0px;font-size:7.3px;color:#111;font-weight:normal;transform:scaleX(0.935);transform-origin:0 0;">Date/Time Field</span>
<svg style="left:805px;top:143.36px" width="10" height="8" viewBox="0 0 10 8"><rect x="0.5" y="0.5" width="9" height="7" fill="#fafafa" stroke="#9db8d8"/><rect x="2.6" y="4.6" width="1.4" height="1.4" fill="#111"/></svg>
<span class="t" style="left:816.0px;top:145.0px;font-size:7.3px;color:#111;font-weight:normal;transform:scaleX(0.945);transform-origin:0 0;">Decimal Field</span>
<svg style="left:874px;top:143.36px" width="10" height="8" viewBox="0 0 10 8"><rect x="0.5" y="0.5" width="9" height="7" fill="#eef4fb" stroke="#88aad0"/><path d="M1.8 5.5L4.2 2.2L3.6 5.3L5 4.4H8.3" stroke="#111" stroke-width="0.9" fill="none"/></svg>
<span class="t" style="left:885.4px;top:145.0px;font-size:7.3px;color:#111;font-weight:normal;transform:scaleX(0.971);transform-origin:0 0;">Signature Field</span>
<svg style="left:943px;top:142.36px" width="10.5" height="10" viewBox="0 0 10.5 10"><rect x="0.5" y="0.5" width="9.5" height="9" fill="#f0f4f8" stroke="#9fb8d6"/><rect x="0.5" y="0.5" width="9.5" height="2.2" fill="#c8d8ea"/><rect x="2.2" y="3.8" width="3.8" height="5" fill="#a8a8a8"/><rect x="7.2" y="3.3" width="2" height="5.5" fill="#7a8a9a"/></svg>
<span class="t" style="left:955.0px;top:145.0px;font-size:7.3px;color:#111;font-weight:normal;transform:scaleX(0.992);transform-origin:0 0;">Drop-down List</span>
<svg style="left:735px;top:153.72px" width="10.5" height="7.5" viewBox="0 0 10.5 7.5"><rect x="0.6" y="0.6" width="9.3" height="6.3" rx="0" fill="#f2f2f2" stroke="#2a2a2a" stroke-width="1.1"/><path d="M2.6 2.4H4.6V5.1H2.6Z M5.6 2.2V5.2 M5.8 3.7L7.9 2.2 M5.8 3.7L7.9 5.2" stroke="#777" stroke-width="0.8" fill="none"/></svg>
<span class="t" style="left:747.0px;top:155.0px;font-size:7.3px;color:#111;font-weight:normal;transform:scaleX(0.968);transform-origin:0 0;">Email Submit Button</span>
<svg style="left:874px;top:153.72px" width="10.5" height="7.5" viewBox="0 0 10.5 7.5"><rect x="0.6" y="0.6" width="9.3" height="6.3" rx="0" fill="#f2f2f2" stroke="#2a2a2a" stroke-width="1.1"/><path d="M2.6 2.4H4.6V5.1H2.6Z M5.6 2.2V5.2 M5.8 3.7L7.9 2.2 M5.8 3.7L7.9 5.2" stroke="#777" stroke-width="0.8" fill="none"/></svg>
<span class="t" style="left:885.4px;top:155.0px;font-size:7.3px;color:#111;font-weight:normal;transform:scaleX(0.941);transform-origin:0 0;">HTTP Submit Button</span>
<svg style="left:735px;top:163.07999999999998px" width="10" height="9" viewBox="0 0 10 9"><rect x="0.5" y="0.5" width="9" height="8" fill="#f8c878" stroke="#d09040"/><rect x="5" y="2" width="4" height="5" fill="#8ab0d8"/></svg>
<span class="t" style="left:747.0px;top:165.0px;font-size:7.3px;color:#111;font-weight:normal;">Image</span>
<svg style="left:805px;top:163.07999999999998px" width="10" height="9" viewBox="0 0 10 9"><rect x="0.5" y="0.5" width="9" height="8" fill="#f8c878" stroke="#d09040"/><rect x="5" y="2" width="4" height="5" fill="#8ab0d8"/></svg>
<span class="t" style="left:816.0px;top:165.0px;font-size:7.3px;color:#111;font-weight:normal;transform:scaleX(0.970);transform-origin:0 0;">Image Field</span>
<svg style="left:874px;top:161.57999999999998px" width="10" height="10" viewBox="0 0 10 10"><path d="M1 9.2L9.2 1" stroke="#2c6cb4" stroke-width="1.9" stroke-linecap="round"/></svg>
<span class="t" style="left:885.4px;top:165.0px;font-size:7.3px;color:#111;font-weight:normal;transform:scaleX(0.920);transform-origin:0 0;">Line</span>
<svg style="left:943px;top:163.07999999999998px" width="10.5" height="10" viewBox="0 0 10.5 10"><rect x="0.5" y="0.5" width="9.5" height="9" fill="#f0f4f8" stroke="#9fb8d6"/><rect x="2" y="2" width="4" height="6" fill="#b0b0b0"/><rect x="7.3" y="1.5" width="2" height="7" fill="#8898a8"/></svg>
<span class="t" style="left:955.0px;top:165.0px;font-size:7.3px;color:#111;font-weight:normal;transform:scaleX(0.924);transform-origin:0 0;">List Box</span>
<svg style="left:735px;top:174.44px" width="10" height="8" viewBox="0 0 10 8"><rect x="0.5" y="0.5" width="9" height="7" fill="#fafafa" stroke="#9db8d8"/><rect x="2.6" y="4.6" width="1.4" height="1.4" fill="#111"/></svg>
<span class="t" style="left:747.0px;top:176.0px;font-size:7.3px;color:#111;font-weight:normal;">Numeric Field</span>
<svg style="left:805px;top:173.44px" width="10" height="9" viewBox="0 0 10 9"><rect x="0.5" y="0.5" width="9" height="8" fill="#f8c878" stroke="#d09040"/><rect x="5" y="2" width="4" height="5" fill="#8ab0d8"/></svg>
<span class="t" style="left:816.0px;top:176.0px;font-size:7.3px;color:#111;font-weight:normal;transform:scaleX(0.924);transform-origin:0 0;">Paper Forms Barcode</span>
<svg style="left:943px;top:174.94px" width="10.5" height="6.5" viewBox="0 0 10.5 6.5"><rect x="0.5" y="0.5" width="9.5" height="5.5" fill="#fff" stroke="#6a8cb8"/><path d="M2.2 3.2H3.4M4.6 3.2H5.8M7 3.2H8.2" stroke="#111" stroke-width="1.1"/></svg>
<span class="t" style="left:955.0px;top:176.0px;font-size:7.3px;color:#111;font-weight:normal;transform:scaleX(0.950);transform-origin:0 0;">Password Field</span>
<svg style="left:735px;top:184.8px" width="10.5" height="7.5" viewBox="0 0 10.5 7.5"><rect x="0.6" y="0.6" width="9.3" height="6.3" rx="0" fill="#f2f2f2" stroke="#2a2a2a" stroke-width="1.1"/><path d="M2.6 2.4H4.6V5.1H2.6Z M5.6 2.2V5.2 M5.8 3.7L7.9 2.2 M5.8 3.7L7.9 5.2" stroke="#777" stroke-width="0.8" fill="none"/></svg>
<span class="t" style="left:747.0px;top:186.0px;font-size:7.3px;color:#111;font-weight:normal;">Print Button</span>
<svg style="left:805px;top:183.8px" width="10" height="9" viewBox="0 0 10 9"><rect x="0.5" y="0.5" width="9" height="8" fill="#f8c878" stroke="#d09040"/><rect x="5" y="2" width="4" height="5" fill="#8ab0d8"/></svg>
<span class="t" style="left:816.0px;top:186.0px;font-size:7.3px;color:#111;font-weight:normal;transform:scaleX(0.995);transform-origin:0 0;">Radio Button</span>
<svg style="left:874px;top:184.3px" width="10.5" height="8.5" viewBox="0 0 10.5 8.5"><defs><linearGradient id="gr1" x1="0" y1="0" x2="0" y2="1"><stop offset="0" stop-color="#9cc0e8"/><stop offset="1" stop-color="#3f7cc0"/></linearGradient></defs><rect x="0.5" y="0.5" width="9.5" height="7.5" fill="url(#gr1)" stroke="#3a70b0" stroke-width="0.8"/></svg>
<span class="t" style="left:885.4px;top:186.0px;font-size:7.3px;color:#111;font-weight:normal;transform:scaleX(0.949);transform-origin:0 0;">Rectangle</span>
<svg style="left:943px;top:184.8px" width="10.5" height="7.5" viewBox="0 0 10.5 7.5"><rect x="0.6" y="0.6" width="9.3" height="6.3" rx="1.5" fill="#d8d8d8" stroke="#2a2a2a" stroke-width="1.1"/><path d="M2.6 2.4H4.6V5.1H2.6Z M5.6 2.2V5.2 M5.8 3.7L7.9 2.2 M5.8 3.7L7.9 5.2" stroke="#777" stroke-width="0.8" fill="none"/></svg>
<span class="t" style="left:955.0px;top:186.0px;font-size:7.3px;color:#111;font-weight:normal;transform:scaleX(0.979);transform-origin:0 0;">Reset Button</span>
<svg style="left:735px;top:194.16px" width="10.5" height="8" viewBox="0 0 10.5 8"><rect x="0.5" y="0.5" width="9.5" height="7" fill="#fff" stroke="#6a9bd0"/></svg>
<svg style="left:805px;top:194.16px" width="10.5" height="8" viewBox="0 0 10.5 8"><rect x="0.5" y="0.5" width="9.5" height="7" fill="#fff" stroke="#6a9bd0"/></svg>
<svg style="left:874px;top:194.16px" width="10.5" height="8" viewBox="0 0 10.5 8"><rect x="0.5" y="0.5" width="9.5" height="7" fill="#fff" stroke="#6a9bd0"/></svg>
<svg style="left:943px;top:194.16px" width="10.5" height="8" viewBox="0 0 10.5 8"><rect x="0.5" y="0.5" width="9.5" height="7" fill="#fff" stroke="#6a9bd0"/></svg>
<div style="left:734.0px;top:210.5px;width:190.0px;height:13.3px;background:linear-gradient(#f8f8f8,#e6e6e6 50%,#d2d2d2);border-bottom:1px solid #c2c2c2;border-radius:3px"></div>
<div style="left:734.0px;top:223.95px;width:190.0px;height:13.3px;background:linear-gradient(#f8f8f8,#e6e6e6 50%,#d2d2d2);border-bottom:1px solid #c2c2c2;border-radius:3px"></div>
<div style="left:734.0px;top:237.4px;width:190.0px;height:13.3px;background:linear-gradient(#f8f8f8,#e6e6e6 50%,#d2d2d2);border-bottom:1px solid #c2c2c2;border-radius:3px"></div>
<svg style="left:738px;top:241.20000000000002px" width="4" height="6" viewBox="0 0 4 6"><path d="M0 0L4 3L0 6Z" fill="#111"/></svg>
<span class="t" style="left:755.0px;top:240.0px;font-size:7.3px;color:#111;font-weight:normal;transform:scaleX(0.931);transform-origin:0 0;">FormBuilder</span>
<div style="left:734.0px;top:250.85px;width:190.0px;height:13.3px;background:linear-gradient(#f8f8f8,#e6e6e6 50%,#d2d2d2);border-bottom:1px solid #c2c2c2;border-radius:3px"></div>
<svg style="left:738px;top:254.65px" width="4" height="6" viewBox="0 0 4 6"><path d="M0 0L4 3L0 6Z" fill="#111"/></svg>
<span class="t" style="left:755.0px;top:253.0px;font-size:7.3px;color:#111;font-weight:normal;transform:scaleX(0.941);transform-origin:0 0;">WebDynproNative</span>
<div style="left:734.0px;top:264.3px;width:190.0px;height:13.3px;background:linear-gradient(#f8f8f8,#e6e6e6 50%,#d2d2d2);border-bottom:1px solid #c2c2c2;border-radius:3px"></div>
<svg style="left:738px;top:268.1px" width="4" height="6" viewBox="0 0 4 6"><path d="M0 0L4 3L0 6Z" fill="#111"/></svg>
<span class="t" style="left:755.0px;top:267.0px;font-size:7.3px;color:#111;font-weight:normal;transform:scaleX(0.905);transform-origin:0 0;">ISR Native Controls</span>
<div style="left:722.5px;top:167.3px;width:129.5px;height:67.7px;background:rgba(0,0,0,0.18);filter:blur(1px)"></div>
<div style="left:720.5px;top:165.3px;width:129.5px;height:67.7px;background:#f0f0f0;border:1px solid #979797"></div>
<div style="left:738.0px;top:167.3px;width:1.0px;height:63.7px;background:#e2e2e2"></div>
<div style="left:739.0px;top:167.3px;width:1.0px;height:63.7px;background:#fff"></div>
<span class="t" style="left:742.0px;top:170.0px;font-size:8.7px;color:#111;font-weight:normal;transform:scaleX(0.823);transform-origin:0 0;">Use name (TextField1)</span>
<span class="t" style="left:742.0px;top:183.0px;font-size:8.7px;color:#111;font-weight:normal;transform:scaleX(0.827);transform-origin:0 0;">Use global data</span>
<div style="left:739.0px;top:193.0px;width:108.0px;height:1.0px;background:#e0e0e0"></div>
<div style="left:739.0px;top:194.0px;width:108.0px;height:1.0px;background:#fff"></div>
<div style="left:722.2px;top:199.4px;width:123.8px;height:12.9px;background:linear-gradient(#f2f7fd,#e2ecf8);border:1px solid #aaccf0;border-radius:2px"></div>
<span class="t" style="left:742.0px;top:202.0px;font-size:8.7px;color:#111;font-weight:normal;transform:scaleX(0.772);transform-origin:0 0;">Use &quot;ZTEST_FORM_02&quot;</span>
<svg style="left:839.5px;top:203.5px" width="3" height="6" viewBox="0 0 3 6"><path d="M0 0L3 3L0 6Z" fill="#111"/></svg>
<div style="left:739.0px;top:215.5px;width:108.0px;height:1.0px;background:#e0e0e0"></div>
<div style="left:739.0px;top:216.5px;width:108.0px;height:1.0px;background:#fff"></div>
<span class="t" style="left:742.0px;top:220.0px;font-size:8.7px;color:#111;font-weight:normal;transform:scaleX(0.870);transform-origin:0 0;">No data binding</span>
<div style="left:848.6px;top:199.3px;width:77.9px;height:16.7px;background:rgba(0,0,0,0.18);filter:blur(1px)"></div>
<div style="left:846.6px;top:197.3px;width:77.9px;height:16.7px;background:#f0f0f0;border:1px solid #979797"></div>
<div style="left:864.4px;top:199.3px;width:1.0px;height:12.7px;background:#e2e2e2"></div>
<div style="left:865.4px;top:199.3px;width:1.0px;height:12.7px;background:#fff"></div>
<div style="left:848.5px;top:199.0px;width:75.0px;height:13.7px;background:linear-gradient(#f2f7fd,#e2ecf8);border:1px solid #aaccf0;border-radius:2px"></div>
<span class="t" style="left:868.0px;top:202.0px;font-size:8.7px;color:#111;font-weight:normal;transform:scaleX(0.704);transform-origin:0 0;">IS_SPFLI</span>
<svg style="left:917.5px;top:203.5px" width="3" height="6" viewBox="0 0 3 6"><path d="M0 0L3 3L0 6Z" fill="#111"/></svg>
<div style="left:926.6px;top:199.4px;width:98.4px;height:232.6px;background:rgba(0,0,0,0.18);filter:blur(1px)"></div>
<div style="left:924.6px;top:197.4px;width:98.4px;height:232.6px;background:#f0f0f0;border:1px solid #979797"></div>
<div style="left:942.2px;top:199.4px;width:1.0px;height:228.6px;background:#e2e2e2"></div>
<div style="left:943.2px;top:199.4px;width:1.0px;height:228.6px;background:#fff"></div>
<div style="left:926.5px;top:199.0px;width:95.0px;height:13.5px;background:linear-gradient(#f2f7fd,#e2ecf8);border:1px solid #aaccf0;border-radius:2px"></div>
<span class="t" style="left:946.0px;top:202.0px;font-size:8.7px;color:#111;font-weight:normal;transform:scaleX(0.790);transform-origin:0 0;">MANDT</span>
<span class="t" style="left:946.0px;top:216.0px;font-size:8.7px;color:#111;font-weight:normal;transform:scaleX(0.790);transform-origin:0 0;">CARRID</span>
<span class="t" style="left:946.0px;top:229.0px;font-size:8.7px;color:#111;font-weight:normal;transform:scaleX(0.790);transform-origin:0 0;">CONNID</span>
<span class="t" style="left:946.0px;top:243.0px;font-size:8.7px;color:#111;font-weight:normal;transform:scaleX(0.790);transform-origin:0 0;">COUNTRYFR</span>
<span class="t" style="left:946.0px;top:257.0px;font-size:8.7px;color:#111;font-weight:normal;transform:scaleX(0.790);transform-origin:0 0;">CITYFROM</span>
<span class="t" style="left:946.0px;top:270.0px;font-size:8.7px;color:#111;font-weight:normal;transform:scaleX(0.790);transform-origin:0 0;">AIRPFROM</span>
<span class="t" style="left:946.0px;top:284.0px;font-size:8.7px;color:#111;font-weight:normal;transform:scaleX(0.790);transform-origin:0 0;">COUNTRYTO</span>
<span class="t" style="left:946.0px;top:297.0px;font-size:8.7px;color:#111;font-weight:normal;transform:scaleX(0.790);transform-origin:0 0;">CITYTO</span>
<span class="t" style="left:946.0px;top:311.0px;font-size:8.7px;color:#111;font-weight:normal;transform:scaleX(0.790);transform-origin:0 0;">AIRPTO</span>
<span class="t" style="left:946.0px;top:324.0px;font-size:8.7px;color:#111;font-weight:normal;transform:scaleX(0.790);transform-origin:0 0;">FLTIME</span>
<span class="t" style="left:946.0px;top:338.0px;font-size:8.7px;color:#111;font-weight:normal;transform:scaleX(0.790);transform-origin:0 0;">DEPTIME</span>
<span class="t" style="left:946.0px;top:351.0px;font-size:8.7px;color:#111;font-weight:normal;transform:scaleX(0.790);transform-origin:0 0;">ARRTIME</span>
<span class="t" style="left:946.0px;top:365.0px;font-size:8.7px;color:#111;font-weight:normal;transform:scaleX(0.790);transform-origin:0 0;">DISTANCE</span>
<span class="t" style="left:946.0px;top:378.0px;font-size:8.7px;color:#111;font-weight:normal;transform:scaleX(0.790);transform-origin:0 0;">DISTID</span>
<span class="t" style="left:946.0px;top:392.0px;font-size:8.7px;color:#111;font-weight:normal;transform:scaleX(0.790);transform-origin:0 0;">FLTYPE</span>
<span class="t" style="left:946.0px;top:406.0px;font-size:8.7px;color:#111;font-weight:normal;transform:scaleX(0.790);transform-origin:0 0;">PERIOD</span>
<svg style="left:0;top:0" width="1024" height="417" viewBox="0 0 1024 417"><path d="M428.6 366.8H476L473 369.8H431.6Z" fill="#5b84b4"/><path d="M0 204.8L3 207.8V249.4L0 252.4Z" fill="#5b84b4"/><path d="M579 205.9L582.2 208.9V249.9L579 252.9Z" fill="#5b84b4"/><path d="M730 233L732.8 236V252L730 249Z" fill="#5b84b4"/></svg>
<svg style="left:0;top:0" width="1024" height="417" viewBox="0 0 1024 417"><path d="M707 182.2L709.6 184.6L717 179.6" stroke="#e8453f" stroke-width="3.6" fill="none" stroke-linecap="round" stroke-linejoin="round"/><path d="M822.9 208.7L825.2 211.3L830.2 206.7" stroke="#e8453f" stroke-width="3.4" fill="none" stroke-linecap="round" stroke-linejoin="round"/><path d="M903.9 208.2L905.8 210.8L910.6 205.6" stroke="#e8453f" stroke-width="3.4" fill="none" stroke-linecap="round" stroke-linejoin="round"/><path d="M977.2 206.6L979.6 209.6L985 202.4" stroke="#e8453f" stroke-width="3.8" fill="none" stroke-linecap="round" stroke-linejoin="round"/></svg></body></html>
